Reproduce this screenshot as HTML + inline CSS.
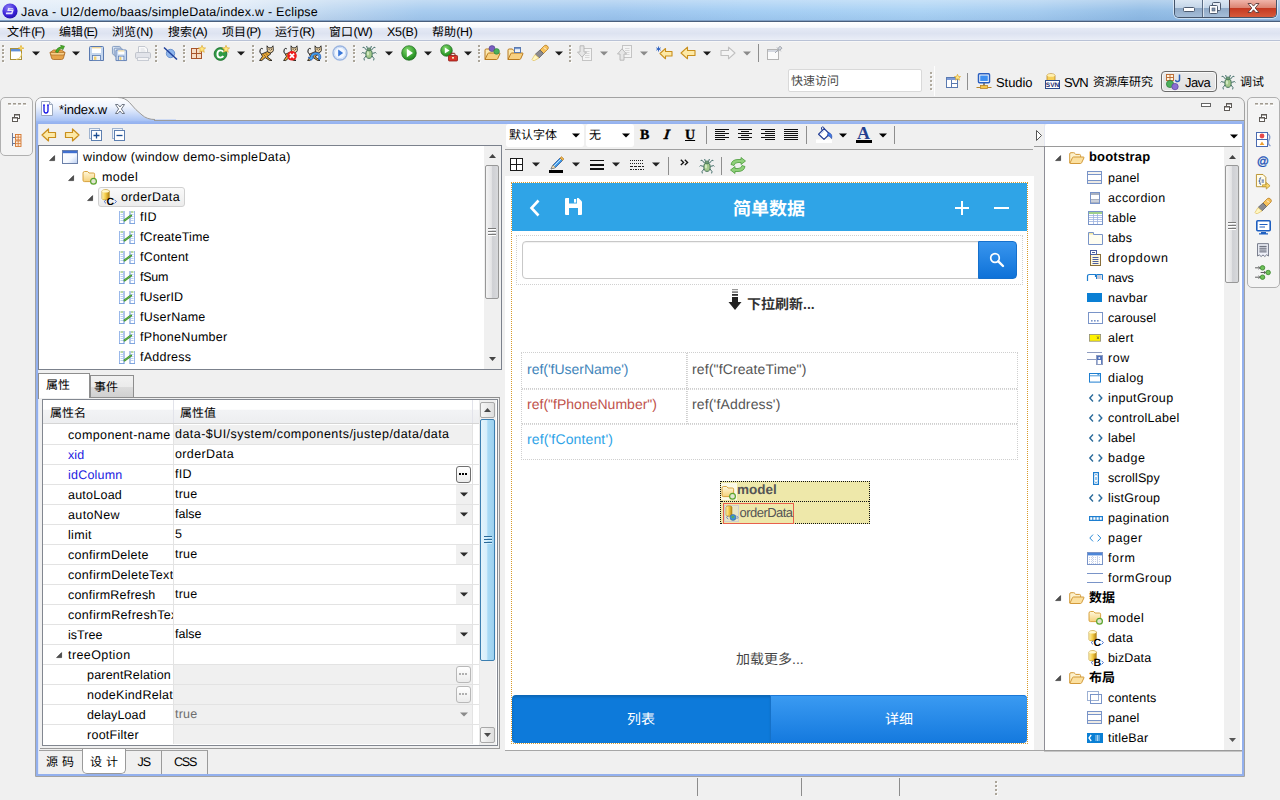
<!DOCTYPE html>
<html><head><meta charset="utf-8"><title>Java - UI2/demo/baas/simpleData/index.w - Eclipse</title>
<style>
html,body{margin:0;padding:0}
body{text-rendering:geometricPrecision;width:1280px;height:800px;position:relative;overflow:hidden;background:#f0f0f0;font-family:"Liberation Sans",sans-serif;font-size:12.5px;color:#000}
.t{position:absolute;white-space:nowrap;line-height:16px;height:16px;font-size:12.5px;letter-spacing:.32px;color:#000}
.b{font-weight:bold}
.h{position:absolute;white-space:nowrap;line-height:20px;height:20px;font-size:14px;letter-spacing:0}
</style></head>
<body>
<svg width="0" height="0" style="position:absolute;left:0;top:0"><defs><radialGradient id="gI" cx=".4" cy=".3" r=".8"><stop offset="0" stop-color="#8a7df5"/><stop offset=".6" stop-color="#3a22d8"/><stop offset="1" stop-color="#1d0f9a"/></radialGradient><linearGradient id="gT" x1="0" y1="0" x2="0" y2="1"><stop offset="0" stop-color="#ffffff"/><stop offset=".35" stop-color="#eef3fd"/><stop offset=".7" stop-color="#c3d5f8"/><stop offset="1" stop-color="#9dbaf3"/></linearGradient><linearGradient id="gW" x1="0" y1="0" x2="1" y2="1"><stop offset="0" stop-color="#fff"/><stop offset=".6" stop-color="#f4f8ff"/><stop offset="1" stop-color="#b9cdf0"/></linearGradient><linearGradient id="gF" x1="0" y1="0" x2="0" y2="1"><stop offset="0" stop-color="#fff8dc"/><stop offset="1" stop-color="#f5d17c"/></linearGradient><linearGradient id="gD" x1="0" y1="0" x2="1" y2="0"><stop offset="0" stop-color="#fff4b4"/><stop offset=".5" stop-color="#f3cb46"/><stop offset="1" stop-color="#b07f10"/></linearGradient><radialGradient id="gR" cx=".4" cy=".3" r=".8"><stop offset="0" stop-color="#7fd66a"/><stop offset=".7" stop-color="#2f9a2a"/><stop offset="1" stop-color="#1a6a1a"/></radialGradient></defs></svg>
<div style="position:absolute;left:0px;top:0px;width:1280px;height:22px;background:linear-gradient(90deg,#e0ecf8 0%,#dbe8f6 19%,#bcd6f0 26%,#a3c9ee 33%,#9cc5ee 48%,#a1ccf3 58%,#a8d1f4 72%,#a2caef 81%,#8fbbe5 89%,#97c0e8 100%)"></div>
<div style="position:absolute;left:0px;top:0px;width:1280px;height:22px;background:linear-gradient(180deg,rgba(255,255,255,.35) 0%,rgba(255,255,255,.05) 50%,rgba(60,100,160,.10) 100%)"></div>
<div style="position:absolute;left:0px;top:20px;width:1280px;height:1px;background:#7f9fc4"></div>
<div style="position:absolute;left:0px;top:21px;width:1280px;height:1px;background:#4a5f7c"></div>
<svg style="position:absolute;left:2px;top:3px;overflow:visible;" width="16" height="16" viewBox="0 0 16 16"><circle cx="8" cy="8" r="7.6" fill="url(#gI)"/><path d="M11.5 5H6.2L5.2 8h4.6l-.5 1.6H4.2l-.5 1.6h6.6l1.5-4.6H7.2l.3-.9h3.5z" fill="#e8e6ff"/></svg>
<div class="t" style="left:21px;top:4px;letter-spacing:0.234px;">Java - UI2/demo/baas/simpleData/index.w - Eclipse</div>
<div style="position:absolute;left:1174px;top:0px;width:103px;height:18px;border:1px solid #44546a;border-top:none;border-radius:0 0 5px 5px;box-sizing:border-box;overflow:hidden;box-shadow:0 0 0 1px rgba(255,255,255,.55)"><div style="position:absolute;left:0;top:0;width:55px;height:17px;background:linear-gradient(180deg,#dbe7f3 0%,#c3d5e8 45%,#8fa9c6 50%,#a5bdd8 100%)"></div><div style="position:absolute;left:27px;top:0;width:1px;height:17px;background:#5a6c84"></div><div style="position:absolute;left:28px;top:0;width:1px;height:17px;background:rgba(255,255,255,.6)"></div><div style="position:absolute;left:54px;top:0;width:1px;height:17px;background:#5a3030"></div><div style="position:absolute;left:55px;top:0;width:47px;height:17px;background:linear-gradient(180deg,#f0b5aa 0%,#dc8573 45%,#c53a22 50%,#d65a3c 100%)"></div></div>
<svg style="position:absolute;left:1174px;top:0px;overflow:visible;" width="103" height="18" viewBox="0 0 103 18"><rect x="9.5" y="7.5" width="11" height="4" rx="1" fill="#fff" stroke="#4d5b70" stroke-width="1"/><rect x="38.5" y="2.5" width="8" height="8" rx="1" fill="#e8eef6" stroke="#4d5b70"/><rect x="35.5" y="5.5" width="8" height="8" rx="1" fill="#fff" stroke="#4d5b70"/><rect x="38" y="8" width="3" height="3" fill="#7f93ad" stroke="#4d5b70" stroke-width=".6"/><path d="M74 3.5h3.2l2.3 2.6 2.3-2.6H85l-3.8 4.5L85 12.5h-3.2l-2.3-2.7-2.3 2.7H74l3.8-4.5z" fill="#fff" stroke="#5a3a3a" stroke-width=".9"/></svg>
<div style="position:absolute;left:0px;top:22px;width:1280px;height:19px;background:linear-gradient(180deg,#ffffff 0%,#f6f8fc 28%,#e4e9f5 34%,#dde3f1 60%,#e8ecf6 90%,#f3f5fa 100%)"></div>
<div style="position:absolute;left:0px;top:40px;width:1280px;height:1px;background:#b9c2d6"></div>
<div style="position:absolute;left:0px;top:41px;width:1280px;height:1px;background:#f7f7f7"></div>
<svg style="position:absolute;left:7px;top:24px;overflow:visible;" width="26" height="15.6" viewBox="0 -12 26 15.6"><text x="0" y="0" font-family="'Liberation Sans','Noto Sans CJK SC',sans-serif" font-size="12" fill="#000">文件</text></svg>
<div class="t" style="left:31.3px;top:23.5px;letter-spacing:-1.020px;">(F)</div>
<svg style="position:absolute;left:59.2px;top:24px;overflow:visible;" width="26" height="15.6" viewBox="0 -12 26 15.6"><text x="0" y="0" font-family="'Liberation Sans','Noto Sans CJK SC',sans-serif" font-size="12" fill="#000">编辑</text></svg>
<div class="t" style="left:83.5px;top:23.5px;letter-spacing:-1.171px;">(E)</div>
<svg style="position:absolute;left:112px;top:24px;overflow:visible;" width="26" height="15.6" viewBox="0 -12 26 15.6"><text x="0" y="0" font-family="'Liberation Sans','Noto Sans CJK SC',sans-serif" font-size="12" fill="#000">浏览</text></svg>
<div class="t" style="left:136.3px;top:23.5px;letter-spacing:-0.234px;">(N)</div>
<svg style="position:absolute;left:168px;top:24px;overflow:visible;" width="26" height="15.6" viewBox="0 -12 26 15.6"><text x="0" y="0" font-family="'Liberation Sans','Noto Sans CJK SC',sans-serif" font-size="12" fill="#000">搜索</text></svg>
<div class="t" style="left:192.3px;top:23.5px;letter-spacing:-0.587px;">(A)</div>
<svg style="position:absolute;left:222px;top:24px;overflow:visible;" width="26" height="15.6" viewBox="0 -12 26 15.6"><text x="0" y="0" font-family="'Liberation Sans','Noto Sans CJK SC',sans-serif" font-size="12" fill="#000">项目</text></svg>
<div class="t" style="left:246.3px;top:23.5px;letter-spacing:-0.921px;">(P)</div>
<svg style="position:absolute;left:275px;top:24px;overflow:visible;" width="26" height="15.6" viewBox="0 -12 26 15.6"><text x="0" y="0" font-family="'Liberation Sans','Noto Sans CJK SC',sans-serif" font-size="12" fill="#000">运行</text></svg>
<div class="t" style="left:299.3px;top:23.5px;letter-spacing:-0.901px;">(R)</div>
<svg style="position:absolute;left:329.2px;top:24px;overflow:visible;" width="26" height="15.6" viewBox="0 -12 26 15.6"><text x="0" y="0" font-family="'Liberation Sans','Noto Sans CJK SC',sans-serif" font-size="12" fill="#000">窗口</text></svg>
<div class="t" style="left:353.6px;top:23.5px;letter-spacing:-0.491px;">(W)</div>
<div class="t" style="left:387px;top:23.5px;letter-spacing:-0.290px;">X5(B)</div>
<svg style="position:absolute;left:432px;top:24px;overflow:visible;" width="26" height="15.6" viewBox="0 -12 26 15.6"><text x="0" y="0" font-family="'Liberation Sans','Noto Sans CJK SC',sans-serif" font-size="12" fill="#000">帮助</text></svg>
<div class="t" style="left:456.3px;top:23.5px;letter-spacing:-0.484px;">(H)</div>
<div style="position:absolute;left:788px;top:69px;width:134px;height:23px;background:#fff;border:1px solid #d9d9d9;border-radius:2px;box-sizing:border-box"></div>
<svg style="position:absolute;left:791px;top:73px;overflow:visible;" width="50" height="15.6" viewBox="0 -12 50 15.6"><text x="0" y="0" font-family="'Liberation Sans','Noto Sans CJK SC',sans-serif" font-size="12" fill="#4a4a4a">快速访问</text></svg>
<div style="position:absolute;left:930px;top:72px;width:2px;height:2px;background:#b0aa9e;box-shadow:1px 1px 0 #fbfbfb"></div>
<div style="position:absolute;left:930px;top:76px;width:2px;height:2px;background:#b0aa9e;box-shadow:1px 1px 0 #fbfbfb"></div>
<div style="position:absolute;left:930px;top:80px;width:2px;height:2px;background:#b0aa9e;box-shadow:1px 1px 0 #fbfbfb"></div>
<div style="position:absolute;left:930px;top:84px;width:2px;height:2px;background:#b0aa9e;box-shadow:1px 1px 0 #fbfbfb"></div>
<div style="position:absolute;left:930px;top:88px;width:2px;height:2px;background:#b0aa9e;box-shadow:1px 1px 0 #fbfbfb"></div>
<div style="position:absolute;left:934px;top:66px;width:1px;height:30px;background:#fdfdfd"></div>
<div style="position:absolute;left:967px;top:73px;width:1px;height:17px;background:#8e8e8e"></div>
<div class="t" style="left:996px;top:75px;letter-spacing:-0.060px;font-size:13px;">Studio</div>
<div class="t" style="left:1064px;top:75px;letter-spacing:-1.077px;font-size:13px;">SVN</div>
<svg style="position:absolute;left:1093px;top:74px;overflow:visible;" width="62" height="15.6" viewBox="0 -12 62 15.6"><text x="0" y="0" font-family="'Liberation Sans','Noto Sans CJK SC',sans-serif" font-size="12" fill="#000">资源库研究</text></svg>
<div style="position:absolute;left:1161px;top:71px;width:56px;height:21px;background:linear-gradient(180deg,#e9e9e9,#e2e2e2);border:1px solid #6a6a6a;border-radius:4px;box-sizing:border-box;box-shadow:inset 0 0 0 1px #f8f8f8"></div>
<div class="t" style="left:1185px;top:75px;letter-spacing:-0.615px;font-size:13px;">Java</div>
<svg style="position:absolute;left:1240px;top:74px;overflow:visible;" width="26" height="15.6" viewBox="0 -12 26 15.6"><text x="0" y="0" font-family="'Liberation Sans','Noto Sans CJK SC',sans-serif" font-size="12" fill="#000">调试</text></svg>
<div style="position:absolute;left:0px;top:97px;width:33px;height:59px;border:1px solid #b0b0b0;border-radius:5px;background:#f4f4f4;box-sizing:border-box"></div>
<div style="position:absolute;left:8px;top:103px;width:3px;height:1px;background:#a09a90"></div>
<div style="position:absolute;left:8px;top:104px;width:3px;height:1px;background:#c8c4bc"></div>
<div style="position:absolute;left:9px;top:105px;width:3px;height:1px;background:#fff"></div>
<div style="position:absolute;left:13px;top:103px;width:3px;height:1px;background:#a09a90"></div>
<div style="position:absolute;left:13px;top:104px;width:3px;height:1px;background:#c8c4bc"></div>
<div style="position:absolute;left:14px;top:105px;width:3px;height:1px;background:#fff"></div>
<div style="position:absolute;left:18px;top:103px;width:3px;height:1px;background:#a09a90"></div>
<div style="position:absolute;left:18px;top:104px;width:3px;height:1px;background:#c8c4bc"></div>
<div style="position:absolute;left:19px;top:105px;width:3px;height:1px;background:#fff"></div>
<div style="position:absolute;left:23px;top:103px;width:3px;height:1px;background:#a09a90"></div>
<div style="position:absolute;left:23px;top:104px;width:3px;height:1px;background:#c8c4bc"></div>
<div style="position:absolute;left:24px;top:105px;width:3px;height:1px;background:#fff"></div>
<div style="position:absolute;left:1247px;top:97px;width:33px;height:191px;border:1px solid #b0b0b0;border-radius:5px;background:#f4f4f4;box-sizing:border-box"></div>
<div style="position:absolute;left:1255px;top:103px;width:3px;height:1px;background:#a09a90"></div>
<div style="position:absolute;left:1255px;top:104px;width:3px;height:1px;background:#c8c4bc"></div>
<div style="position:absolute;left:1256px;top:105px;width:3px;height:1px;background:#fff"></div>
<div style="position:absolute;left:1260px;top:103px;width:3px;height:1px;background:#a09a90"></div>
<div style="position:absolute;left:1260px;top:104px;width:3px;height:1px;background:#c8c4bc"></div>
<div style="position:absolute;left:1261px;top:105px;width:3px;height:1px;background:#fff"></div>
<div style="position:absolute;left:1265px;top:103px;width:3px;height:1px;background:#a09a90"></div>
<div style="position:absolute;left:1265px;top:104px;width:3px;height:1px;background:#c8c4bc"></div>
<div style="position:absolute;left:1266px;top:105px;width:3px;height:1px;background:#fff"></div>
<div style="position:absolute;left:1270px;top:103px;width:3px;height:1px;background:#a09a90"></div>
<div style="position:absolute;left:1270px;top:104px;width:3px;height:1px;background:#c8c4bc"></div>
<div style="position:absolute;left:1271px;top:105px;width:3px;height:1px;background:#fff"></div>
<div style="position:absolute;left:35px;top:97px;width:1210px;height:680px;border:1px solid #a2a2a2;border-radius:7px 7px 0 0;box-sizing:border-box;background:#f0f0f0"></div>
<div style="position:absolute;left:36px;top:121px;width:2px;height:655px;background:#93b0ee"></div>
<div style="position:absolute;left:38px;top:124px;width:1px;height:650px;background:#dfe7f8"></div>
<div style="position:absolute;left:1242px;top:121px;width:2px;height:655px;background:#93b0ee"></div>
<div style="position:absolute;left:36px;top:774px;width:1208px;height:2px;background:#93b0ee"></div>
<svg style="position:absolute;left:36px;top:98px;overflow:visible;" width="140" height="25" viewBox="0 0 140 25"><path d="M0 25V7Q0 0 7 0H82Q89 0 93.5 5Q100 13 106 17.5Q111 21.5 118 21.5H140V25Z" fill="url(#gT)"/><path d="M82 -.5Q89 -.5 93.5 4.5Q100 12.5 106 17Q111 21.5 119 21.5" fill="none" stroke="#9a9a9a" stroke-width="1"/></svg>
<div style="position:absolute;left:154px;top:120px;width:1090px;height:1px;background:#9c9c9c"></div>
<div style="position:absolute;left:36px;top:121px;width:1208px;height:3px;background:linear-gradient(180deg,#9dbaf3,#93b0ee)"></div>
<svg style="position:absolute;left:41px;top:101px;overflow:visible;" width="13" height="15" viewBox="0 0 13 15"><path d="M.5 .5H8.5L11.5 3.5V14.5H.5Z" fill="#fff" stroke="#9aa7bd"/><path d="M8.5 .5V3.5H11.5" fill="#e6ecf6" stroke="#9aa7bd"/><path d="M3 4V9.5Q3 12 5 12T7 9.5V4" fill="none" stroke="#1414e6" stroke-width="1.3"/><path d="M2 4H4M6 4H8" stroke="#1414e6"/></svg>
<div class="t" style="left:59px;top:102px;letter-spacing:-0.142px;font-size:13px;">*index.w</div>
<svg style="position:absolute;left:114px;top:103px;overflow:visible;" width="12" height="12" viewBox="0 0 12 12"><path d="M1.5 1.5H4L6 4 8 1.5H10.5L7.4 6 10.5 10.5H8L6 8 4 10.5H1.5L4.6 6Z" fill="#fff" stroke="#6f7785" stroke-width="1"/></svg>
<svg style="position:absolute;left:1201px;top:103px;overflow:visible;" width="10" height="4" viewBox="0 0 10 4"><rect x=".5" y=".5" width="9" height="3" fill="#fff" stroke="#666"/></svg>
<div style="position:absolute;left:697px;top:778px;width:1px;height:18px;background:#8c8c8c"></div>
<div style="position:absolute;left:801px;top:778px;width:1px;height:18px;background:#8c8c8c"></div>
<div style="position:absolute;left:899px;top:778px;width:1px;height:18px;background:#8c8c8c"></div>
<div style="position:absolute;left:995px;top:781px;width:2px;height:2px;background:#aaa498;box-shadow:1px 1px 0 #fbfbfb"></div>
<div style="position:absolute;left:995px;top:785px;width:2px;height:2px;background:#aaa498;box-shadow:1px 1px 0 #fbfbfb"></div>
<div style="position:absolute;left:995px;top:789px;width:2px;height:2px;background:#aaa498;box-shadow:1px 1px 0 #fbfbfb"></div>
<div style="position:absolute;left:995px;top:793px;width:2px;height:2px;background:#aaa498;box-shadow:1px 1px 0 #fbfbfb"></div>
<svg style="position:absolute;left:41px;top:128px;overflow:visible;" width="16" height="14" viewBox="0 0 16 14"><path d="M1 7L7.5 1V4.5H14.5V9.5H7.5V13Z" fill="#fde9a6" stroke="#c98f1d" stroke-width="1.2" stroke-linejoin="round"/></svg>
<svg style="position:absolute;left:64px;top:128px;overflow:visible;" width="16" height="14" viewBox="0 0 16 14"><path d="M1 7L7.5 1V4.5H14.5V9.5H7.5V13Z" transform="translate(16,0) scale(-1,1)" fill="#fde9a6" stroke="#c98f1d" stroke-width="1.2" stroke-linejoin="round"/></svg>
<svg style="position:absolute;left:89px;top:128px;overflow:visible;" width="14" height="14" viewBox="0 0 14 14"><rect x=".5" y=".5" width="10" height="10" fill="#eef3fa" stroke="#9fb3cf"/><rect x="2.5" y="2.5" width="10" height="10" fill="#fff" stroke="#5d7fb0"/><path d="M4.5 7.5H10.5M7.5 4.5V10.5" stroke="#1c4e93" stroke-width="1.3"/></svg>
<svg style="position:absolute;left:112px;top:128px;overflow:visible;" width="14" height="14" viewBox="0 0 14 14"><rect x=".5" y=".5" width="10" height="10" fill="#eef3fa" stroke="#9fb3cf"/><rect x="2.5" y="2.5" width="10" height="10" fill="#fff" stroke="#5d7fb0"/><path d="M4.5 7.5H10.5" stroke="#1c4e93" stroke-width="1.3"/></svg>
<div style="position:absolute;left:38px;top:145px;width:464px;height:225px;background:#fff;border:1px solid #7b818c;box-sizing:border-box"></div>
<div style="position:absolute;left:484px;top:146px;width:17px;height:223px;background:#f0f0f0"></div>
<svg style="position:absolute;left:489px;top:154px;overflow:visible;" width="7" height="4" viewBox="0 0 7 4"><path d="M0 4L3.5 0 7 4Z" fill="#444"/></svg>
<svg style="position:absolute;left:489px;top:357px;overflow:visible;" width="7" height="4" viewBox="0 0 7 4"><path d="M0 0H7L3.5 4Z" fill="#444"/></svg>
<div style="position:absolute;left:485px;top:165px;width:14px;height:134px;border:1px solid #979797;border-radius:2px;box-sizing:border-box;background:linear-gradient(90deg,#f4f4f4 0%,#e4e4e6 45%,#cfd0d4 55%,#d8d9dc 100%)"></div>
<div style="position:absolute;left:488px;top:228px;width:8px;height:1px;background:#7a7a7a"></div>
<div style="position:absolute;left:488px;top:229px;width:8px;height:1px;background:#fff"></div>
<div style="position:absolute;left:488px;top:231px;width:8px;height:1px;background:#7a7a7a"></div>
<div style="position:absolute;left:488px;top:232px;width:8px;height:1px;background:#fff"></div>
<div style="position:absolute;left:488px;top:234px;width:8px;height:1px;background:#7a7a7a"></div>
<div style="position:absolute;left:488px;top:235px;width:8px;height:1px;background:#fff"></div>
<svg style="position:absolute;left:49px;top:155px;overflow:visible;" width="6" height="6" viewBox="0 0 6 6"><path d="M5.6 .6V5.6H.6Z" fill="#505050" stroke="#262626" stroke-width=".6" stroke-linejoin="round"/></svg>
<svg style="position:absolute;left:62px;top:150px;overflow:visible;" width="16" height="14" viewBox="0 0 16 14"><rect x=".5" y=".5" width="15" height="13" fill="url(#gW)" stroke="#6a7fa8"/><rect x="1" y="1" width="14" height="2.2" fill="#3f6fd0"/></svg>
<div class="t" style="left:83px;top:149px;letter-spacing:0.360px;">window (window demo-simpleData)</div>
<svg style="position:absolute;left:68px;top:175px;overflow:visible;" width="6" height="6" viewBox="0 0 6 6"><path d="M5.6 .6V5.6H.6Z" fill="#505050" stroke="#262626" stroke-width=".6" stroke-linejoin="round"/></svg>
<svg style="position:absolute;left:82px;top:170px;overflow:visible;" width="16" height="15" viewBox="0 0 16 15"><path d="M1 3.2Q1 1.5 2.6 1.5H5.6L7 3H11.4Q12.6 3 12.6 4.2V10.4Q12.6 11.6 11.4 11.6H2.4Q1 11.6 1 10.2Z" fill="url(#gF)" stroke="#d49a2f" stroke-width=".9"/><circle cx="11.5" cy="11.2" r="2.9" fill="#e1e6d2" stroke="#5aa52c" stroke-width="1.2"/></svg>
<div class="t" style="left:102px;top:169px;letter-spacing:0.431px;">model</div>
<svg style="position:absolute;left:87px;top:195px;overflow:visible;" width="6" height="6" viewBox="0 0 6 6"><path d="M5.6 .6V5.6H.6Z" fill="#505050" stroke="#262626" stroke-width=".6" stroke-linejoin="round"/></svg>
<div style="position:absolute;left:98px;top:187px;width:87px;height:20px;border:1px solid #d0d0d0;border-radius:3px;box-sizing:border-box;background:linear-gradient(180deg,#fafafa,#ececec)"></div>
<svg style="position:absolute;left:101px;top:189px;overflow:visible;" width="17" height="17" viewBox="0 0 17 17"><path d="M.8 2.2Q.8 .6 4.6 .6T8.4 2.2V9.4Q8.4 11 4.6 11T.8 9.4Z" fill="url(#gD)" stroke="#b48a1c" stroke-width=".5"/><ellipse cx="4.6" cy="2.2" rx="3.6" ry="1.3" fill="#fff7cc"/><path d="M5 10.8L3.2 12.6 5 14.4M13.6 10.8L15.4 12.6 13.6 14.4" fill="none" stroke="#3a63c8" stroke-width=".9"/><text x="9.4" y="16.2" font-family="Liberation Sans,sans-serif" font-weight="bold" font-size="10.5" text-anchor="middle" fill="#000" stroke="#fff" stroke-width=".0">C</text></svg>
<div class="t" style="left:121px;top:189px;letter-spacing:0.380px;">orderData</div>
<svg style="position:absolute;left:119px;top:210px;overflow:visible;" width="17" height="14" viewBox="0 0 17 14"><rect x="0.5" y="1" width="4.5" height="12.5" fill="#fff"/><path d="M0.5 1V13.5" stroke="#8fb0e8" stroke-width=".9"/><path d="M5 1V13.5" stroke="#4f7fd0" stroke-width=".9"/><path d="M0 13.5H5.5" stroke="#5f8fd6" stroke-width=".8"/><path d="M1.5 2H4" stroke="#6ab04a" stroke-width="1"/><path d="M1.5 4.5H4M1.5 6.5H4M1.5 8.5H4M1.5 10.5H4" stroke="#a9c4ee" stroke-width=".8"/><rect x="11.0" y="1" width="4.5" height="12.5" fill="#fff"/><path d="M11.0 1V13.5" stroke="#4f7fd0" stroke-width=".9"/><path d="M15.5 1V13.5" stroke="#8fb0e8" stroke-width=".9"/><path d="M10.5 13.5H16.0" stroke="#5f8fd6" stroke-width=".8"/><path d="M12.0 2H14.5" stroke="#6ab04a" stroke-width="1"/><path d="M12.0 4.5H14.5M12.0 6.5H14.5M12.0 8.5H14.5M12.0 10.5H14.5" stroke="#a9c4ee" stroke-width=".8"/><path d="M5.6 10.4L12 5.6" stroke="#3f8f30" stroke-width="2.2" stroke-linecap="round"/><path d="M5.8 10.2L11.8 5.7" stroke="#6cc24a" stroke-width=".9" stroke-linecap="round"/></svg>
<div class="t" style="left:140px;top:209px;letter-spacing:0.259px;">fID</div>
<svg style="position:absolute;left:119px;top:230px;overflow:visible;" width="17" height="14" viewBox="0 0 17 14"><rect x="0.5" y="1" width="4.5" height="12.5" fill="#fff"/><path d="M0.5 1V13.5" stroke="#8fb0e8" stroke-width=".9"/><path d="M5 1V13.5" stroke="#4f7fd0" stroke-width=".9"/><path d="M0 13.5H5.5" stroke="#5f8fd6" stroke-width=".8"/><path d="M1.5 2H4" stroke="#6ab04a" stroke-width="1"/><path d="M1.5 4.5H4M1.5 6.5H4M1.5 8.5H4M1.5 10.5H4" stroke="#a9c4ee" stroke-width=".8"/><rect x="11.0" y="1" width="4.5" height="12.5" fill="#fff"/><path d="M11.0 1V13.5" stroke="#4f7fd0" stroke-width=".9"/><path d="M15.5 1V13.5" stroke="#8fb0e8" stroke-width=".9"/><path d="M10.5 13.5H16.0" stroke="#5f8fd6" stroke-width=".8"/><path d="M12.0 2H14.5" stroke="#6ab04a" stroke-width="1"/><path d="M12.0 4.5H14.5M12.0 6.5H14.5M12.0 8.5H14.5M12.0 10.5H14.5" stroke="#a9c4ee" stroke-width=".8"/><path d="M5.6 10.4L12 5.6" stroke="#3f8f30" stroke-width="2.2" stroke-linecap="round"/><path d="M5.8 10.2L11.8 5.7" stroke="#6cc24a" stroke-width=".9" stroke-linecap="round"/></svg>
<div class="t" style="left:140px;top:229px;letter-spacing:0.109px;">fCreateTime</div>
<svg style="position:absolute;left:119px;top:250px;overflow:visible;" width="17" height="14" viewBox="0 0 17 14"><rect x="0.5" y="1" width="4.5" height="12.5" fill="#fff"/><path d="M0.5 1V13.5" stroke="#8fb0e8" stroke-width=".9"/><path d="M5 1V13.5" stroke="#4f7fd0" stroke-width=".9"/><path d="M0 13.5H5.5" stroke="#5f8fd6" stroke-width=".8"/><path d="M1.5 2H4" stroke="#6ab04a" stroke-width="1"/><path d="M1.5 4.5H4M1.5 6.5H4M1.5 8.5H4M1.5 10.5H4" stroke="#a9c4ee" stroke-width=".8"/><rect x="11.0" y="1" width="4.5" height="12.5" fill="#fff"/><path d="M11.0 1V13.5" stroke="#4f7fd0" stroke-width=".9"/><path d="M15.5 1V13.5" stroke="#8fb0e8" stroke-width=".9"/><path d="M10.5 13.5H16.0" stroke="#5f8fd6" stroke-width=".8"/><path d="M12.0 2H14.5" stroke="#6ab04a" stroke-width="1"/><path d="M12.0 4.5H14.5M12.0 6.5H14.5M12.0 8.5H14.5M12.0 10.5H14.5" stroke="#a9c4ee" stroke-width=".8"/><path d="M5.6 10.4L12 5.6" stroke="#3f8f30" stroke-width="2.2" stroke-linecap="round"/><path d="M5.8 10.2L11.8 5.7" stroke="#6cc24a" stroke-width=".9" stroke-linecap="round"/></svg>
<div class="t" style="left:140px;top:249px;letter-spacing:0.188px;">fContent</div>
<svg style="position:absolute;left:119px;top:270px;overflow:visible;" width="17" height="14" viewBox="0 0 17 14"><rect x="0.5" y="1" width="4.5" height="12.5" fill="#fff"/><path d="M0.5 1V13.5" stroke="#8fb0e8" stroke-width=".9"/><path d="M5 1V13.5" stroke="#4f7fd0" stroke-width=".9"/><path d="M0 13.5H5.5" stroke="#5f8fd6" stroke-width=".8"/><path d="M1.5 2H4" stroke="#6ab04a" stroke-width="1"/><path d="M1.5 4.5H4M1.5 6.5H4M1.5 8.5H4M1.5 10.5H4" stroke="#a9c4ee" stroke-width=".8"/><rect x="11.0" y="1" width="4.5" height="12.5" fill="#fff"/><path d="M11.0 1V13.5" stroke="#4f7fd0" stroke-width=".9"/><path d="M15.5 1V13.5" stroke="#8fb0e8" stroke-width=".9"/><path d="M10.5 13.5H16.0" stroke="#5f8fd6" stroke-width=".8"/><path d="M12.0 2H14.5" stroke="#6ab04a" stroke-width="1"/><path d="M12.0 4.5H14.5M12.0 6.5H14.5M12.0 8.5H14.5M12.0 10.5H14.5" stroke="#a9c4ee" stroke-width=".8"/><path d="M5.6 10.4L12 5.6" stroke="#3f8f30" stroke-width="2.2" stroke-linecap="round"/><path d="M5.8 10.2L11.8 5.7" stroke="#6cc24a" stroke-width=".9" stroke-linecap="round"/></svg>
<div class="t" style="left:140px;top:269px;letter-spacing:-0.231px;">fSum</div>
<svg style="position:absolute;left:119px;top:290px;overflow:visible;" width="17" height="14" viewBox="0 0 17 14"><rect x="0.5" y="1" width="4.5" height="12.5" fill="#fff"/><path d="M0.5 1V13.5" stroke="#8fb0e8" stroke-width=".9"/><path d="M5 1V13.5" stroke="#4f7fd0" stroke-width=".9"/><path d="M0 13.5H5.5" stroke="#5f8fd6" stroke-width=".8"/><path d="M1.5 2H4" stroke="#6ab04a" stroke-width="1"/><path d="M1.5 4.5H4M1.5 6.5H4M1.5 8.5H4M1.5 10.5H4" stroke="#a9c4ee" stroke-width=".8"/><rect x="11.0" y="1" width="4.5" height="12.5" fill="#fff"/><path d="M11.0 1V13.5" stroke="#4f7fd0" stroke-width=".9"/><path d="M15.5 1V13.5" stroke="#8fb0e8" stroke-width=".9"/><path d="M10.5 13.5H16.0" stroke="#5f8fd6" stroke-width=".8"/><path d="M12.0 2H14.5" stroke="#6ab04a" stroke-width="1"/><path d="M12.0 4.5H14.5M12.0 6.5H14.5M12.0 8.5H14.5M12.0 10.5H14.5" stroke="#a9c4ee" stroke-width=".8"/><path d="M5.6 10.4L12 5.6" stroke="#3f8f30" stroke-width="2.2" stroke-linecap="round"/><path d="M5.8 10.2L11.8 5.7" stroke="#6cc24a" stroke-width=".9" stroke-linecap="round"/></svg>
<div class="t" style="left:140px;top:289px;letter-spacing:0.127px;">fUserID</div>
<svg style="position:absolute;left:119px;top:310px;overflow:visible;" width="17" height="14" viewBox="0 0 17 14"><rect x="0.5" y="1" width="4.5" height="12.5" fill="#fff"/><path d="M0.5 1V13.5" stroke="#8fb0e8" stroke-width=".9"/><path d="M5 1V13.5" stroke="#4f7fd0" stroke-width=".9"/><path d="M0 13.5H5.5" stroke="#5f8fd6" stroke-width=".8"/><path d="M1.5 2H4" stroke="#6ab04a" stroke-width="1"/><path d="M1.5 4.5H4M1.5 6.5H4M1.5 8.5H4M1.5 10.5H4" stroke="#a9c4ee" stroke-width=".8"/><rect x="11.0" y="1" width="4.5" height="12.5" fill="#fff"/><path d="M11.0 1V13.5" stroke="#4f7fd0" stroke-width=".9"/><path d="M15.5 1V13.5" stroke="#8fb0e8" stroke-width=".9"/><path d="M10.5 13.5H16.0" stroke="#5f8fd6" stroke-width=".8"/><path d="M12.0 2H14.5" stroke="#6ab04a" stroke-width="1"/><path d="M12.0 4.5H14.5M12.0 6.5H14.5M12.0 8.5H14.5M12.0 10.5H14.5" stroke="#a9c4ee" stroke-width=".8"/><path d="M5.6 10.4L12 5.6" stroke="#3f8f30" stroke-width="2.2" stroke-linecap="round"/><path d="M5.8 10.2L11.8 5.7" stroke="#6cc24a" stroke-width=".9" stroke-linecap="round"/></svg>
<div class="t" style="left:140px;top:309px;letter-spacing:0.255px;">fUserName</div>
<svg style="position:absolute;left:119px;top:330px;overflow:visible;" width="17" height="14" viewBox="0 0 17 14"><rect x="0.5" y="1" width="4.5" height="12.5" fill="#fff"/><path d="M0.5 1V13.5" stroke="#8fb0e8" stroke-width=".9"/><path d="M5 1V13.5" stroke="#4f7fd0" stroke-width=".9"/><path d="M0 13.5H5.5" stroke="#5f8fd6" stroke-width=".8"/><path d="M1.5 2H4" stroke="#6ab04a" stroke-width="1"/><path d="M1.5 4.5H4M1.5 6.5H4M1.5 8.5H4M1.5 10.5H4" stroke="#a9c4ee" stroke-width=".8"/><rect x="11.0" y="1" width="4.5" height="12.5" fill="#fff"/><path d="M11.0 1V13.5" stroke="#4f7fd0" stroke-width=".9"/><path d="M15.5 1V13.5" stroke="#8fb0e8" stroke-width=".9"/><path d="M10.5 13.5H16.0" stroke="#5f8fd6" stroke-width=".8"/><path d="M12.0 2H14.5" stroke="#6ab04a" stroke-width="1"/><path d="M12.0 4.5H14.5M12.0 6.5H14.5M12.0 8.5H14.5M12.0 10.5H14.5" stroke="#a9c4ee" stroke-width=".8"/><path d="M5.6 10.4L12 5.6" stroke="#3f8f30" stroke-width="2.2" stroke-linecap="round"/><path d="M5.8 10.2L11.8 5.7" stroke="#6cc24a" stroke-width=".9" stroke-linecap="round"/></svg>
<div class="t" style="left:140px;top:329px;letter-spacing:0.286px;">fPhoneNumber</div>
<svg style="position:absolute;left:119px;top:350px;overflow:visible;" width="17" height="14" viewBox="0 0 17 14"><rect x="0.5" y="1" width="4.5" height="12.5" fill="#fff"/><path d="M0.5 1V13.5" stroke="#8fb0e8" stroke-width=".9"/><path d="M5 1V13.5" stroke="#4f7fd0" stroke-width=".9"/><path d="M0 13.5H5.5" stroke="#5f8fd6" stroke-width=".8"/><path d="M1.5 2H4" stroke="#6ab04a" stroke-width="1"/><path d="M1.5 4.5H4M1.5 6.5H4M1.5 8.5H4M1.5 10.5H4" stroke="#a9c4ee" stroke-width=".8"/><rect x="11.0" y="1" width="4.5" height="12.5" fill="#fff"/><path d="M11.0 1V13.5" stroke="#4f7fd0" stroke-width=".9"/><path d="M15.5 1V13.5" stroke="#8fb0e8" stroke-width=".9"/><path d="M10.5 13.5H16.0" stroke="#5f8fd6" stroke-width=".8"/><path d="M12.0 2H14.5" stroke="#6ab04a" stroke-width="1"/><path d="M12.0 4.5H14.5M12.0 6.5H14.5M12.0 8.5H14.5M12.0 10.5H14.5" stroke="#a9c4ee" stroke-width=".8"/><path d="M5.6 10.4L12 5.6" stroke="#3f8f30" stroke-width="2.2" stroke-linecap="round"/><path d="M5.8 10.2L11.8 5.7" stroke="#6cc24a" stroke-width=".9" stroke-linecap="round"/></svg>
<div class="t" style="left:140px;top:349px;letter-spacing:0.240px;">fAddress</div>
<div style="position:absolute;left:90px;top:375px;width:44px;height:23px;border:1px solid #8e8e8e;border-bottom:none;box-sizing:border-box;background:linear-gradient(180deg,#f2f2f2 0%,#ebebeb 50%,#dcdcdc 52%,#cfcfcf 100%)"></div>
<div style="position:absolute;left:38px;top:373px;width:52px;height:26px;border:1px solid #8e8e8e;border-bottom:none;box-sizing:border-box;background:#fff"></div>
<svg style="position:absolute;left:46px;top:377px;overflow:visible;" width="26" height="15.6" viewBox="0 -12 26 15.6"><text x="0" y="0" font-family="'Liberation Sans','Noto Sans CJK SC',sans-serif" font-size="12" fill="#000">属性</text></svg>
<svg style="position:absolute;left:94px;top:379px;overflow:visible;" width="26" height="15.6" viewBox="0 -12 26 15.6"><text x="0" y="0" font-family="'Liberation Sans','Noto Sans CJK SC',sans-serif" font-size="12" fill="#000">事件</text></svg>
<div style="position:absolute;left:39px;top:397px;width:461px;height:352px;border:1px solid #8e8e8e;box-sizing:border-box;background:#f0f0f0;border-left:none;border-right:none;border-bottom:none"></div>
<div style="position:absolute;left:39px;top:397px;width:50px;height:1px;background:#fff"></div>
<div style="position:absolute;left:42px;top:399px;width:456px;height:347px;border:1px solid #828790;box-sizing:border-box;background:#fff"></div>
<div style="position:absolute;left:497px;top:399px;width:1px;height:347px;background:#828790"></div>
<div style="position:absolute;left:499px;top:398px;width:1px;height:351px;background:#9a9a9a"></div>
<div style="position:absolute;left:40px;top:748px;width:460px;height:1px;background:#9a9a9a"></div>
<div style="position:absolute;left:43px;top:400px;width:436px;height:24px;background:linear-gradient(180deg,#ffffff 0%,#ffffff 40%,#f2f3f5 45%,#edeef0 100%);border-bottom:1px solid #d5d5d5;box-sizing:border-box"></div>
<div style="position:absolute;left:173px;top:400px;width:1px;height:23px;background:#e2e3ea"></div>
<div style="position:absolute;left:472px;top:400px;width:1px;height:23px;background:#e2e3ea"></div>
<svg style="position:absolute;left:50px;top:405px;overflow:visible;" width="38" height="15.6" viewBox="0 -12 38 15.6"><text x="0" y="0" font-family="'Liberation Sans','Noto Sans CJK SC',sans-serif" font-size="12" fill="#000">属性名</text></svg>
<svg style="position:absolute;left:180px;top:405px;overflow:visible;" width="38" height="15.6" viewBox="0 -12 38 15.6"><text x="0" y="0" font-family="'Liberation Sans','Noto Sans CJK SC',sans-serif" font-size="12" fill="#000">属性值</text></svg>
<div style="position:absolute;left:174px;top:425px;width:298px;height:19px;background:#f0f0f0"></div>
<div style="position:absolute;left:43px;top:444px;width:436px;height:1px;background:#e3e3e3"></div>
<div style="position:absolute;left:68px;top:424px;width:105px;height:20px;overflow:hidden"><div class="t" style="left:0;top:3px;color:#000;letter-spacing:0.374px;">component-name</div></div>
<div class="t" style="left:175px;top:426px;letter-spacing:0.454px;color:#000">data-$UI/system/components/justep/data/data</div>
<div style="position:absolute;left:43px;top:464px;width:436px;height:1px;background:#e3e3e3"></div>
<div style="position:absolute;left:68px;top:444px;width:105px;height:20px;overflow:hidden"><div class="t" style="left:0;top:3px;color:#1a1ae0;letter-spacing:0.090px;">xid</div></div>
<div class="t" style="left:175px;top:446px;letter-spacing:0.380px;color:#000">orderData</div>
<div style="position:absolute;left:43px;top:484px;width:436px;height:1px;background:#e3e3e3"></div>
<div style="position:absolute;left:68px;top:464px;width:105px;height:20px;overflow:hidden"><div class="t" style="left:0;top:3px;color:#1a1ae0;letter-spacing:0.213px;">idColumn</div></div>
<div class="t" style="left:175px;top:466px;letter-spacing:0.259px;color:#000">fID</div>
<div style="position:absolute;left:456px;top:466px;width:15px;height:17px;border:1px solid #707070;border-radius:3px;box-sizing:border-box;background:linear-gradient(180deg,#fff,#ececec)"></div>
<div style="position:absolute;left:459px;top:473px;width:2px;height:2px;background:#000"></div>
<div style="position:absolute;left:462px;top:473px;width:2px;height:2px;background:#000"></div>
<div style="position:absolute;left:465px;top:473px;width:2px;height:2px;background:#000"></div>
<div style="position:absolute;left:43px;top:504px;width:436px;height:1px;background:#e3e3e3"></div>
<div style="position:absolute;left:68px;top:484px;width:105px;height:20px;overflow:hidden"><div class="t" style="left:0;top:3px;color:#000;letter-spacing:0.234px;">autoLoad</div></div>
<div class="t" style="left:175px;top:486px;letter-spacing:0.241px;color:#000">true</div>
<div style="position:absolute;left:456px;top:485px;width:16px;height:19px;background:#f0f0f0"></div>
<svg style="position:absolute;left:460px;top:492px;overflow:visible;" width="8" height="5" viewBox="0 0 8 5"><path d="M0 .5H8L4 4.5Z" fill="#2a2a2a"/></svg>
<div style="position:absolute;left:43px;top:524px;width:436px;height:1px;background:#e3e3e3"></div>
<div style="position:absolute;left:68px;top:504px;width:105px;height:20px;overflow:hidden"><div class="t" style="left:0;top:3px;color:#000;letter-spacing:0.381px;">autoNew</div></div>
<div class="t" style="left:175px;top:506px;letter-spacing:0.020px;color:#000">false</div>
<div style="position:absolute;left:456px;top:505px;width:16px;height:19px;background:#f0f0f0"></div>
<svg style="position:absolute;left:460px;top:512px;overflow:visible;" width="8" height="5" viewBox="0 0 8 5"><path d="M0 .5H8L4 4.5Z" fill="#2a2a2a"/></svg>
<div style="position:absolute;left:43px;top:544px;width:436px;height:1px;background:#e3e3e3"></div>
<div style="position:absolute;left:68px;top:524px;width:105px;height:20px;overflow:hidden"><div class="t" style="left:0;top:3px;color:#000;letter-spacing:0.307px;">limit</div></div>
<div class="t" style="left:175px;top:526px;letter-spacing:-0.201px;color:#000">5</div>
<div style="position:absolute;left:43px;top:564px;width:436px;height:1px;background:#e3e3e3"></div>
<div style="position:absolute;left:68px;top:544px;width:105px;height:20px;overflow:hidden"><div class="t" style="left:0;top:3px;color:#000;letter-spacing:0.280px;">confirmDelete</div></div>
<div class="t" style="left:175px;top:546px;letter-spacing:0.241px;color:#000">true</div>
<div style="position:absolute;left:456px;top:545px;width:16px;height:19px;background:#f0f0f0"></div>
<svg style="position:absolute;left:460px;top:552px;overflow:visible;" width="8" height="5" viewBox="0 0 8 5"><path d="M0 .5H8L4 4.5Z" fill="#2a2a2a"/></svg>
<div style="position:absolute;left:43px;top:584px;width:436px;height:1px;background:#e3e3e3"></div>
<div style="position:absolute;left:68px;top:564px;width:105px;height:20px;overflow:hidden"><div class="t" style="left:0;top:3px;color:#000;">confirmDeleteText</div></div>
<div style="position:absolute;left:43px;top:604px;width:436px;height:1px;background:#e3e3e3"></div>
<div style="position:absolute;left:68px;top:584px;width:105px;height:20px;overflow:hidden"><div class="t" style="left:0;top:3px;color:#000;letter-spacing:0.197px;">confirmRefresh</div></div>
<div class="t" style="left:175px;top:586px;letter-spacing:0.241px;color:#000">true</div>
<div style="position:absolute;left:456px;top:585px;width:16px;height:19px;background:#f0f0f0"></div>
<svg style="position:absolute;left:460px;top:592px;overflow:visible;" width="8" height="5" viewBox="0 0 8 5"><path d="M0 .5H8L4 4.5Z" fill="#2a2a2a"/></svg>
<div style="position:absolute;left:43px;top:624px;width:436px;height:1px;background:#e3e3e3"></div>
<div style="position:absolute;left:68px;top:604px;width:105px;height:20px;overflow:hidden"><div class="t" style="left:0;top:3px;color:#000;">confirmRefreshText</div></div>
<div style="position:absolute;left:43px;top:644px;width:436px;height:1px;background:#e3e3e3"></div>
<div style="position:absolute;left:68px;top:624px;width:105px;height:20px;overflow:hidden"><div class="t" style="left:0;top:3px;color:#000;letter-spacing:0.039px;">isTree</div></div>
<div class="t" style="left:175px;top:626px;letter-spacing:0.020px;color:#000">false</div>
<div style="position:absolute;left:456px;top:625px;width:16px;height:19px;background:#f0f0f0"></div>
<svg style="position:absolute;left:460px;top:632px;overflow:visible;" width="8" height="5" viewBox="0 0 8 5"><path d="M0 .5H8L4 4.5Z" fill="#2a2a2a"/></svg>
<div style="position:absolute;left:43px;top:664px;width:436px;height:1px;background:#e3e3e3"></div>
<div style="position:absolute;left:68px;top:644px;width:105px;height:20px;overflow:hidden"><div class="t" style="left:0;top:3px;color:#000;letter-spacing:0.414px;">treeOption</div></div>
<svg style="position:absolute;left:56px;top:652px;overflow:visible;" width="6" height="6" viewBox="0 0 6 6"><path d="M5.6 .6V5.6H.6Z" fill="#505050" stroke="#262626" stroke-width=".6" stroke-linejoin="round"/></svg>
<div style="position:absolute;left:174px;top:665px;width:298px;height:19px;background:#f0f0f0"></div>
<div style="position:absolute;left:43px;top:684px;width:436px;height:1px;background:#e3e3e3"></div>
<div style="position:absolute;left:87px;top:664px;width:86px;height:20px;overflow:hidden"><div class="t" style="left:0;top:3px;color:#000;letter-spacing:0.193px;">parentRelation</div></div>
<div style="position:absolute;left:456px;top:666px;width:15px;height:17px;border:1px solid #b8b8b8;border-radius:3px;box-sizing:border-box;background:linear-gradient(180deg,#fff,#ececec)"></div>
<div style="position:absolute;left:459px;top:673px;width:2px;height:2px;background:#b0b0b0"></div>
<div style="position:absolute;left:462px;top:673px;width:2px;height:2px;background:#b0b0b0"></div>
<div style="position:absolute;left:465px;top:673px;width:2px;height:2px;background:#b0b0b0"></div>
<div style="position:absolute;left:174px;top:685px;width:298px;height:19px;background:#f0f0f0"></div>
<div style="position:absolute;left:43px;top:704px;width:436px;height:1px;background:#e3e3e3"></div>
<div style="position:absolute;left:87px;top:684px;width:86px;height:20px;overflow:hidden"><div class="t" style="left:0;top:3px;color:#000;">nodeKindRelation</div></div>
<div style="position:absolute;left:456px;top:686px;width:15px;height:17px;border:1px solid #b8b8b8;border-radius:3px;box-sizing:border-box;background:linear-gradient(180deg,#fff,#ececec)"></div>
<div style="position:absolute;left:459px;top:693px;width:2px;height:2px;background:#b0b0b0"></div>
<div style="position:absolute;left:462px;top:693px;width:2px;height:2px;background:#b0b0b0"></div>
<div style="position:absolute;left:465px;top:693px;width:2px;height:2px;background:#b0b0b0"></div>
<div style="position:absolute;left:174px;top:705px;width:298px;height:19px;background:#f0f0f0"></div>
<div style="position:absolute;left:43px;top:724px;width:436px;height:1px;background:#e3e3e3"></div>
<div style="position:absolute;left:87px;top:704px;width:86px;height:20px;overflow:hidden"><div class="t" style="left:0;top:3px;color:#000;letter-spacing:0.118px;">delayLoad</div></div>
<div class="t" style="left:175px;top:706px;letter-spacing:0.241px;color:#6d6d6d">true</div>
<div style="position:absolute;left:456px;top:705px;width:16px;height:19px;background:#f0f0f0"></div>
<svg style="position:absolute;left:460px;top:712px;overflow:visible;" width="8" height="5" viewBox="0 0 8 5"><path d="M0 .5H8L4 4.5Z" fill="#8a8a8a"/></svg>
<div style="position:absolute;left:174px;top:725px;width:298px;height:19px;background:#f0f0f0"></div>
<div style="position:absolute;left:43px;top:744px;width:436px;height:1px;background:#fff"></div>
<div style="position:absolute;left:87px;top:724px;width:86px;height:20px;overflow:hidden"><div class="t" style="left:0;top:3px;color:#000;letter-spacing:0.269px;">rootFilter</div></div>
<div style="position:absolute;left:173px;top:424px;width:1px;height:320px;background:#e3e3e3"></div>
<div style="position:absolute;left:472px;top:424px;width:1px;height:320px;background:#e3e3e3"></div>
<div style="position:absolute;left:479px;top:400px;width:1px;height:345px;background:#e9e9e9"></div>
<div style="position:absolute;left:480px;top:400px;width:16px;height:345px;background:#f0f0f0"></div>
<div style="position:absolute;left:480px;top:402px;width:15px;height:16px;border:1px solid #a8a8a8;border-radius:2px;box-sizing:border-box;background:linear-gradient(90deg,#f7f7f7,#dedede)"></div>
<svg style="position:absolute;left:484px;top:408px;overflow:visible;" width="7" height="4" viewBox="0 0 7 4"><path d="M0 4L3.5 0 7 4Z" fill="#4a4a4a"/></svg>
<div style="position:absolute;left:480px;top:727px;width:15px;height:16px;border:1px solid #a8a8a8;border-radius:2px;box-sizing:border-box;background:linear-gradient(90deg,#f7f7f7,#dedede)"></div>
<svg style="position:absolute;left:484px;top:733px;overflow:visible;" width="7" height="4" viewBox="0 0 7 4"><path d="M0 0H7L3.5 4Z" fill="#4a4a4a"/></svg>
<div style="position:absolute;left:480px;top:419px;width:15px;height:242px;border:1px solid #3c7fb1;border-radius:2px;box-sizing:border-box;background:linear-gradient(90deg,#e3f4fc 0%,#d6eefb 45%,#a9dbf6 52%,#9cd0ee 100%)"></div>
<div style="position:absolute;left:484px;top:536px;width:8px;height:1px;background:#2b6a99"></div>
<div style="position:absolute;left:484px;top:537px;width:8px;height:1px;background:#d6f0fd"></div>
<div style="position:absolute;left:484px;top:539px;width:8px;height:1px;background:#2b6a99"></div>
<div style="position:absolute;left:484px;top:540px;width:8px;height:1px;background:#d6f0fd"></div>
<div style="position:absolute;left:484px;top:542px;width:8px;height:1px;background:#2b6a99"></div>
<div style="position:absolute;left:484px;top:543px;width:8px;height:1px;background:#d6f0fd"></div>
<div style="position:absolute;left:39px;top:750px;width:1201px;height:23px;background:#f0f0f0"></div>
<div style="position:absolute;left:39px;top:750px;width:44px;height:23px;border-top:1px solid #a0a0a0;box-sizing:border-box"></div>
<div style="position:absolute;left:126px;top:750px;width:36px;height:24px;border-right:1px solid #9a9a9a;border-top:1px solid #a0a0a0;box-sizing:border-box"></div>
<div style="position:absolute;left:162px;top:750px;width:46px;height:24px;border-right:1px solid #9a9a9a;border-top:1px solid #a0a0a0;box-sizing:border-box"></div>
<div style="position:absolute;left:82px;top:749px;width:44px;height:25px;background:#fff;border:1px solid #9a9a9a;border-top:none;border-radius:0 0 5px 5px;box-sizing:border-box"></div>
<svg style="position:absolute;left:46px;top:754px;overflow:visible;" width="30" height="15.6" viewBox="0 -12 30 15.6"><text x="0" y="0" font-family="'Liberation Sans','Noto Sans CJK SC',sans-serif" font-size="12" fill="#000">源</text><text x="16" y="0" font-family="'Liberation Sans','Noto Sans CJK SC',sans-serif" font-size="12" fill="#000">码</text></svg>
<svg style="position:absolute;left:90px;top:754px;overflow:visible;" width="30" height="15.6" viewBox="0 -12 30 15.6"><text x="0" y="0" font-family="'Liberation Sans','Noto Sans CJK SC',sans-serif" font-size="12" fill="#000">设</text><text x="16" y="0" font-family="'Liberation Sans','Noto Sans CJK SC',sans-serif" font-size="12" fill="#000">计</text></svg>
<div class="t" style="left:137.5px;top:754px;letter-spacing:-1.044px;">JS</div>
<div class="t" style="left:174px;top:754px;letter-spacing:-1.234px;">CSS</div>
<div style="position:absolute;left:505px;top:149px;width:528px;height:1px;background:#a0a0a0"></div>
<div style="position:absolute;left:506px;top:124px;width:78px;height:23px;background:#fff;border-radius:3px"></div>
<div style="position:absolute;left:586px;top:124px;width:48px;height:23px;background:#fff;border-radius:3px"></div>
<svg style="position:absolute;left:509px;top:127px;overflow:visible;" width="50" height="15.6" viewBox="0 -12 50 15.6"><text x="0" y="0" font-family="'Liberation Sans','Noto Sans CJK SC',sans-serif" font-size="12" fill="#000">默认字体</text></svg>
<svg style="position:absolute;left:589px;top:127px;overflow:visible;" width="14" height="15.6" viewBox="0 -12 14 15.6"><text x="0" y="0" font-family="'Liberation Sans','Noto Sans CJK SC',sans-serif" font-size="12" fill="#000">无</text></svg>
<svg style="position:absolute;left:572px;top:133px;overflow:visible;" width="8" height="5" viewBox="0 0 8 5"><path d="M0 .5H8L4 4.5Z" fill="#000"/></svg>
<svg style="position:absolute;left:622px;top:133px;overflow:visible;" width="8" height="5" viewBox="0 0 8 5"><path d="M0 .5H8L4 4.5Z" fill="#000"/></svg>
<div style="position:absolute;left:640px;top:127px;width:12px;height:18px;font:bold 14px 'Liberation Serif',serif;line-height:18px;color:#000;-webkit-text-stroke:.35px #000">B</div>
<div style="position:absolute;left:664px;top:127px;width:12px;height:18px;font:italic bold 14px 'Liberation Serif',serif;line-height:18px;color:#000;-webkit-text-stroke:.45px #000;transform:skewX(-8deg)">I</div>
<div style="position:absolute;left:685px;top:127px;width:12px;height:18px;font:bold 14px 'Liberation Serif',serif;line-height:18px;color:#000;text-decoration:underline;-webkit-text-stroke:.3px #000">U</div>
<div style="position:absolute;left:706px;top:126px;width:1px;height:18px;background:#8e8e8e"></div>
<svg style="position:absolute;left:715px;top:129px;overflow:visible;" width="14" height="12" viewBox="0 0 14 12"><rect x="0" y="0" width="14" height="1" fill="#111"/><rect x="0" y="2" width="10" height="1" fill="#111"/><rect x="0" y="4" width="14" height="1" fill="#111"/><rect x="0" y="6" width="10" height="1" fill="#111"/><rect x="0" y="8" width="14" height="1" fill="#111"/><rect x="0" y="10" width="10" height="1" fill="#111"/></svg>
<svg style="position:absolute;left:738px;top:129px;overflow:visible;" width="14" height="12" viewBox="0 0 14 12"><rect x="0.0" y="0" width="14" height="1" fill="#111"/><rect x="3.0" y="2" width="8" height="1" fill="#111"/><rect x="0.0" y="4" width="14" height="1" fill="#111"/><rect x="3.0" y="6" width="8" height="1" fill="#111"/><rect x="0.0" y="8" width="14" height="1" fill="#111"/><rect x="3.0" y="10" width="8" height="1" fill="#111"/></svg>
<svg style="position:absolute;left:761px;top:129px;overflow:visible;" width="14" height="12" viewBox="0 0 14 12"><rect x="0" y="0" width="14" height="1" fill="#111"/><rect x="4" y="2" width="10" height="1" fill="#111"/><rect x="0" y="4" width="14" height="1" fill="#111"/><rect x="4" y="6" width="10" height="1" fill="#111"/><rect x="0" y="8" width="14" height="1" fill="#111"/><rect x="4" y="10" width="10" height="1" fill="#111"/></svg>
<svg style="position:absolute;left:784px;top:129px;overflow:visible;" width="14" height="12" viewBox="0 0 14 12"><rect x="0" y="0" width="14" height="1" fill="#111"/><rect x="0" y="2" width="14" height="1" fill="#111"/><rect x="0" y="4" width="14" height="1" fill="#111"/><rect x="0" y="6" width="14" height="1" fill="#111"/><rect x="0" y="8" width="14" height="1" fill="#111"/><rect x="0" y="10" width="14" height="1" fill="#111"/></svg>
<div style="position:absolute;left:806px;top:126px;width:1px;height:18px;background:#8e8e8e"></div>
<svg style="position:absolute;left:816px;top:126px;overflow:visible;" width="17" height="18" viewBox="0 0 17 18"><rect x="0" y="13.5" width="16" height="3.5" fill="#fff"/><path d="M2.6 8.2L8.2 2.6L13.6 8L8 13.4Z" fill="#fff" stroke="#1f3a93" stroke-width="1.2" stroke-linejoin="round"/><path d="M6.2 4.6Q4.4 1.2 6.4 .8Q8.2 .6 8.6 4" fill="none" stroke="#1f3a93" stroke-width="1"/><path d="M12.2 6.6Q16.8 7.4 15.6 12.6Q14.2 10 11.4 9.4Z" fill="#3f7ae8" stroke="#1f3a93" stroke-width=".6"/><path d="M4.4 8.2L8.2 4.4" stroke="#9fb6e8" stroke-width=".8"/></svg>
<svg style="position:absolute;left:839px;top:133px;overflow:visible;" width="8" height="5" viewBox="0 0 8 5"><path d="M0 .5H8L4 4.5Z" fill="#000"/></svg>
<div style="position:absolute;left:857px;top:124px;width:16px;height:18px;font:bold 18px 'Liberation Serif',serif;line-height:18px;color:#24408e">A</div>
<div style="position:absolute;left:856px;top:140px;width:16px;height:3px;background:#000"></div>
<svg style="position:absolute;left:879px;top:133px;overflow:visible;" width="8" height="5" viewBox="0 0 8 5"><path d="M0 .5H8L4 4.5Z" fill="#000"/></svg>
<div style="position:absolute;left:894px;top:126px;width:1px;height:18px;background:#8e8e8e"></div>
<svg style="position:absolute;left:510px;top:158px;overflow:visible;" width="13" height="13" viewBox="0 0 13 13"><rect x=".5" y=".5" width="12" height="12" fill="#fff" stroke="#1a1a1a"/><path d="M6.5 0V13M0 6.5H13" stroke="#1a1a1a"/></svg>
<svg style="position:absolute;left:532px;top:162px;overflow:visible;" width="8" height="5" viewBox="0 0 8 5"><path d="M0 .5H8L4 4.5Z" fill="#222"/></svg>
<svg style="position:absolute;left:549px;top:156px;overflow:visible;" width="16" height="18" viewBox="0 0 16 18"><rect x="0" y="14" width="14" height="3" fill="#000"/><path d="M2 13L4 9L11 2L13.5 4.5L6.5 11.5Z" fill="#3f9ae8" stroke="#2a4a8a" stroke-width=".7"/><path d="M5 10L12 3" stroke="#bfe4fb" stroke-width="1"/><path d="M11 2L12.5 .6L15 3L13.5 4.5Z" fill="#f0b24a" stroke="#9a6a1a" stroke-width=".5"/><path d="M2 13L4 9L6.5 11.5Z" fill="#f6e2b8" stroke="#6a5a3a" stroke-width=".4"/></svg>
<svg style="position:absolute;left:572px;top:162px;overflow:visible;" width="8" height="5" viewBox="0 0 8 5"><path d="M0 .5H8L4 4.5Z" fill="#222"/></svg>
<div style="position:absolute;left:590px;top:160px;width:14px;height:1.4px;background:#111"></div>
<div style="position:absolute;left:590px;top:164px;width:14px;height:2px;background:#111"></div>
<div style="position:absolute;left:590px;top:167.5px;width:14px;height:2.6px;background:#111"></div>
<svg style="position:absolute;left:612px;top:162px;overflow:visible;" width="8" height="5" viewBox="0 0 8 5"><path d="M0 .5H8L4 4.5Z" fill="#222"/></svg>
<svg style="position:absolute;left:630px;top:160px;overflow:visible;" width="14" height="11" viewBox="0 0 14 11"><path d="M0 .5H14" stroke="#222" stroke-dasharray="1 1"/><path d="M0 3.5H14" stroke="#222" stroke-dasharray="1 1"/><path d="M0 6.5H14" stroke="#222" stroke-dasharray="3 1"/><path d="M0 9.5H14" stroke="#222" stroke-dasharray="2 1 1 1"/></svg>
<svg style="position:absolute;left:652px;top:162px;overflow:visible;" width="8" height="5" viewBox="0 0 8 5"><path d="M0 .5H8L4 4.5Z" fill="#222"/></svg>
<div style="position:absolute;left:668px;top:157px;width:1px;height:18px;background:#8e8e8e"></div>
<svg style="position:absolute;left:680px;top:159px;overflow:visible;" width="9" height="7" viewBox="0 0 9 7"><path d="M.8 .8L3.6 3.4.8 6M4.8 .8L7.6 3.4 4.8 6" fill="none" stroke="#111" stroke-width="1.3"/></svg>
<svg style="position:absolute;left:699px;top:158px;overflow:visible;" width="16" height="16" viewBox="0 0 16 16"><g stroke="#2f5f5a" stroke-width=".9" fill="none"><path d="M5.4 5L3 2.2 1.6 2.6M10.6 5L13 2.2 14.4 2.6M4.6 8.4L1.4 7.6.6 8.4M11.4 8.4L14.6 7.6 15.4 8.4M5 11L3 13.6 3.4 15.4M11 11L13 13.6 12.6 15.4M6.4 3.4L5.6 1M9.6 3.4L10.4 1"/></g><ellipse cx="8" cy="9" rx="3.2" ry="4.4" fill="#a4c98c" stroke="#3a6a52" stroke-width=".9"/><ellipse cx="8" cy="4.4" rx="2" ry="1.5" fill="#6f9a72" stroke="#3a6a52" stroke-width=".7"/><ellipse cx="7" cy="8.4" rx="1.1" ry="2.2" fill="#d6ecc6" opacity=".9"/></svg>
<div style="position:absolute;left:721px;top:157px;width:1px;height:18px;background:#8e8e8e"></div>
<svg style="position:absolute;left:729px;top:157px;overflow:visible;" width="18" height="17" viewBox="0 0 18 17"><path d="M2 7.5Q3 2.5 9 2.5H12V.5L16.5 4L12 7.5V5.5H9Q5.5 5.5 5 8.5Z" fill="#8fd07a" stroke="#4a9a3a" stroke-width=".8"/><path d="M16 9.5Q15 14.5 9 14.5H6V16.5L1.5 13L6 9.5V11.5H9Q12.5 11.5 13 8.5Z" fill="#8fd07a" stroke="#4a9a3a" stroke-width=".8"/></svg>
<div style="position:absolute;left:505px;top:176px;width:529px;height:574px;background:#fff"></div>
<div style="position:absolute;left:505px;top:750px;width:539px;height:1px;background:#a6a6a6"></div>
<div style="position:absolute;left:511px;top:182px;width:517px;height:562px;border:1px dotted #d89a2a;box-sizing:border-box"></div>
<div style="position:absolute;left:512px;top:183px;width:515px;height:48px;background:#2fa4e7"></div>
<svg style="position:absolute;left:529px;top:199px;overflow:visible;" width="11" height="18" viewBox="0 0 11 18"><path d="M9.5 1.5L2.5 9L9.5 16.5" fill="none" stroke="#fff" stroke-width="2.6"/></svg>
<svg style="position:absolute;left:565px;top:198px;overflow:visible;" width="17" height="17" viewBox="0 0 17 17"><path d="M0 1Q0 0 1 0H13.5L17 3.5V16Q17 17 16 17H1Q0 17 0 16Z" fill="#fff"/><rect x="4" y="0" width="8" height="5.5" fill="#2fa4e7"/><rect x="9" y="1" width="2.2" height="3.6" fill="#fff"/><rect x="4" y="10" width="9" height="7" fill="#2fa4e7"/></svg>
<svg style="position:absolute;left:733px;top:197px;overflow:visible;" width="74" height="23.4" viewBox="0 -18 74 23.4"><text x="0" y="0" font-family="'Liberation Sans','Noto Sans CJK SC',sans-serif" font-size="18" font-weight="bold" fill="#fff">简单数据</text></svg>
<div style="position:absolute;left:955px;top:207px;width:14px;height:2.4px;background:#fff"></div>
<div style="position:absolute;left:960.8px;top:201px;width:2.4px;height:14px;background:#fff"></div>
<div style="position:absolute;left:994px;top:207px;width:15px;height:2.4px;background:#fff"></div>
<div style="position:absolute;left:516px;top:235px;width:507px;height:50px;border:1px dotted #d0d0d0;box-sizing:border-box"></div>
<div style="position:absolute;left:522px;top:241px;width:457px;height:38px;border:1px solid #c8c8c8;border-radius:4px 0 0 4px;box-sizing:border-box;background:#fff;box-shadow:inset 0 1px 1px rgba(0,0,0,.06)"></div>
<div style="position:absolute;left:978px;top:241px;width:39px;height:38px;border-radius:0 4px 4px 0;background:linear-gradient(180deg,#3895ee 0%,#0f72d8 100%);border:1px solid #1670cc;box-sizing:border-box"></div>
<svg style="position:absolute;left:989px;top:252px;overflow:visible;" width="16" height="16" viewBox="0 0 16 16"><circle cx="6" cy="6" r="4.3" fill="none" stroke="#fff" stroke-width="1.7"/><path d="M9.3 9.3L14 14" stroke="#fff" stroke-width="2.4" stroke-linecap="round"/></svg>
<svg style="position:absolute;left:728px;top:289px;overflow:visible;" width="14" height="22" viewBox="0 0 14 22"><rect x="4" y="0" width="6" height="1.2" fill="#999"/><rect x="4" y="2.4" width="6" height="1.4" fill="#666"/><rect x="4" y="5" width="6" height="1.8" fill="#333"/><path d="M4 8H10V13H13.5L7 21 .5 13H4Z" fill="#222"/></svg>
<svg style="position:absolute;left:747px;top:295px;overflow:visible;" width="58" height="18.2" viewBox="0 -14 58 18.2"><text x="0" y="0" font-family="'Liberation Sans','Noto Sans CJK SC',sans-serif" font-size="14" font-weight="bold" fill="#333">下拉刷新</text></svg>
<div class="h b" style="left:803px;top:294px;color:#333">...</div>
<div style="position:absolute;left:521px;top:352px;width:497px;height:108px;border:1px dotted #cfcfcf;box-sizing:border-box"></div>
<div style="position:absolute;left:522px;top:388px;width:495px;height:0px;border-top:1px dotted #cfcfcf"></div>
<div style="position:absolute;left:522px;top:389px;width:495px;height:0px;border-top:1px dotted #d6d6d6"></div>
<div style="position:absolute;left:522px;top:423px;width:495px;height:0px;border-top:1px dotted #cfcfcf"></div>
<div style="position:absolute;left:522px;top:424px;width:495px;height:0px;border-top:1px dotted #d6d6d6"></div>
<div style="position:absolute;left:686px;top:353px;width:0px;height:71px;border-left:1px dotted #cfcfcf"></div>
<div style="position:absolute;left:687px;top:353px;width:0px;height:71px;border-left:1px dotted #d6d6d6"></div>
<div class="h" style="left:527px;top:359px;color:#3f85ba;letter-spacing:-0.018px;">ref('fUserName')</div>
<div class="h" style="left:692px;top:359px;color:#555;letter-spacing:0.134px;">ref("fCreateTime")</div>
<div class="h" style="left:527px;top:394px;color:#c0524c;letter-spacing:0.013px;">ref("fPhoneNumber")</div>
<div class="h" style="left:692px;top:394px;color:#555;letter-spacing:0.150px;">ref('fAddress')</div>
<div class="h" style="left:527px;top:429px;color:#2fa4e7;letter-spacing:0.138px;">ref('fContent')</div>
<div style="position:absolute;left:720px;top:481px;width:150px;height:43px;background:#eee8aa;border:1px dotted #111;box-sizing:border-box"></div>
<div style="position:absolute;left:721px;top:501px;width:148px;height:0px;border-top:1px dotted #111"></div>
<div style="position:absolute;left:721px;top:483px;width:16px;height:17px;background:#fbf9e6"></div>
<svg style="position:absolute;left:721px;top:485px;overflow:visible;" width="16" height="15" viewBox="0 0 16 15"><path d="M1 3.2Q1 1.5 2.6 1.5H5.6L7 3H11.4Q12.6 3 12.6 4.2V10.4Q12.6 11.6 11.4 11.6H2.4Q1 11.6 1 10.2Z" fill="url(#gF)" stroke="#d49a2f" stroke-width=".9"/><circle cx="11.5" cy="11.2" r="2.9" fill="#e1e6d2" stroke="#5aa52c" stroke-width="1.2"/></svg>
<div class="h b" style="left:737px;top:480px;color:#555;font-size:13.5px">model</div>
<div style="position:absolute;left:723px;top:503px;width:71px;height:21px;border:1px solid #e8604c;box-sizing:border-box"></div>
<div style="position:absolute;left:724px;top:505px;width:15px;height:17px;background:#e9e5c4;border:1px solid #cfcfcf;box-sizing:border-box"></div>
<svg style="position:absolute;left:724px;top:505px;overflow:visible;" width="15" height="17" viewBox="0 0 15 17"><path d="M2 2.2Q2 .8 5 .8T8 2.2V10Q8 11.4 5 11.4T2 10Z" fill="url(#gD)" stroke="#b48a1c" stroke-width=".6"/><circle cx="9" cy="12.4" r="3" fill="#3f8fd0" stroke="#2a5fa0" stroke-width=".5"/><path d="M7.4 11.2Q9 10 10.4 11.6Q9.6 13.4 8 13.2Z" fill="#5bb04a"/><path d="M4.2 10.6L2.6 12.4 4.2 14.2M12.6 10.8L14 12.4 12.6 14" fill="none" stroke="#4a6fc4" stroke-width=".8"/></svg>
<div class="h" style="left:739.5px;top:503px;color:#555;font-size:13px;letter-spacing:-0.534px">orderData</div>
<svg style="position:absolute;left:736px;top:650px;overflow:visible;" width="58" height="18.2" viewBox="0 -14 58 18.2"><text x="0" y="0" font-family="'Liberation Sans','Noto Sans CJK SC',sans-serif" font-size="14" fill="#444">加载更多</text></svg>
<div class="h" style="left:792px;top:649px;color:#444">...</div>
<div style="position:absolute;left:512px;top:695px;width:259px;height:48px;background:#0d7ada;border-radius:4px 0 0 4px;box-shadow:inset 0 2px 3px rgba(0,0,0,.18)"></div>
<div style="position:absolute;left:770px;top:695px;width:257px;height:48px;background:linear-gradient(180deg,#3b9bf2 0%,#1479de 100%);border-radius:0 4px 4px 0;box-shadow:inset 0 1px 0 #1c78d6"></div>
<div style="position:absolute;left:770px;top:696px;width:1px;height:46px;background:#1671c8"></div>
<svg style="position:absolute;left:627px;top:710px;overflow:visible;" width="30" height="18.2" viewBox="0 -14 30 18.2"><text x="0" y="0" font-family="'Liberation Sans','Noto Sans CJK SC',sans-serif" font-size="14" fill="#fff">列表</text></svg>
<svg style="position:absolute;left:885px;top:710px;overflow:visible;" width="30" height="18.2" viewBox="0 -14 30 18.2"><text x="0" y="0" font-family="'Liberation Sans','Noto Sans CJK SC',sans-serif" font-size="14" fill="#fff">详细</text></svg>
<svg style="position:absolute;left:1036px;top:130px;overflow:visible;" width="6" height="11" viewBox="0 0 6 11"><path d="M.5 .5V10.5L5.5 5.5Z" fill="#fff" stroke="#555" stroke-width="1"/></svg>
<div style="position:absolute;left:1034px;top:146px;width:12px;height:1px;background:#9a9a9a"></div>
<div style="position:absolute;left:1044px;top:124px;width:1px;height:22px;background:#e4e7f0"></div>
<div style="position:absolute;left:1044px;top:146px;width:1px;height:605px;background:#8e8e96"></div>
<div style="position:absolute;left:1045px;top:124px;width:197px;height:22px;background:#fff;border-radius:3px 0 0 0"></div>
<svg style="position:absolute;left:1230px;top:134px;overflow:visible;" width="8" height="5" viewBox="0 0 8 5"><path d="M0 .5H8L4 4.5Z" fill="#000"/></svg>
<div style="position:absolute;left:1045px;top:146px;width:197px;height:1px;background:#9a9a9a"></div>
<div style="position:absolute;left:1045px;top:147px;width:197px;height:603px;background:#fff"></div>
<div style="position:absolute;left:1044px;top:750px;width:198px;height:1px;background:#9a9a9a"></div>
<div style="position:absolute;left:1044px;top:751px;width:198px;height:1px;background:#c4c4c4"></div>
<div style="position:absolute;left:1224px;top:147px;width:16px;height:603px;background:#f0f0f0"></div>
<svg style="position:absolute;left:1229px;top:155px;overflow:visible;" width="7" height="4" viewBox="0 0 7 4"><path d="M0 4L3.5 0 7 4Z" fill="#444"/></svg>
<svg style="position:absolute;left:1229px;top:738px;overflow:visible;" width="7" height="4" viewBox="0 0 7 4"><path d="M0 0H7L3.5 4Z" fill="#555"/></svg>
<div style="position:absolute;left:1225px;top:165px;width:14px;height:118px;border:1px solid #979797;border-radius:2px;box-sizing:border-box;background:linear-gradient(90deg,#f4f4f4 0%,#e4e4e6 45%,#cfd0d4 55%,#d8d9dc 100%)"></div>
<div style="position:absolute;left:1228px;top:222px;width:8px;height:1px;background:#7a7a7a"></div>
<div style="position:absolute;left:1228px;top:223px;width:8px;height:1px;background:#fff"></div>
<div style="position:absolute;left:1228px;top:225px;width:8px;height:1px;background:#7a7a7a"></div>
<div style="position:absolute;left:1228px;top:226px;width:8px;height:1px;background:#fff"></div>
<div style="position:absolute;left:1228px;top:228px;width:8px;height:1px;background:#7a7a7a"></div>
<div style="position:absolute;left:1228px;top:229px;width:8px;height:1px;background:#fff"></div>
<svg style="position:absolute;left:1055px;top:155px;overflow:visible;" width="6" height="6" viewBox="0 0 6 6"><path d="M5.6 .6V5.6H.6Z" fill="#505050" stroke="#262626" stroke-width=".6" stroke-linejoin="round"/></svg>
<svg style="position:absolute;left:1069px;top:152px;overflow:visible;" width="16" height="13" viewBox="0 0 16 13"><path d="M.7 11V2Q.7 .7 2 .7H4.6Q5.4 .7 6 1.5L6.6 2.4H10.4Q11.6 2.4 11.6 3.6V5" fill="#fdf1cc" stroke="#d39a3a" stroke-width="1"/><path d="M.9 11.4L3.4 5.8Q3.7 5 4.5 5H14.3Q15.4 5 14.9 6L12.6 10.8Q12.3 11.5 11.5 11.5H1.2Z" fill="#fbe0a0" stroke="#d39a3a" stroke-width="1"/></svg>
<div class="t b" style="left:1089px;top:148.5px;font-size:13px;letter-spacing:.15px">bootstrap</div>
<svg style="position:absolute;left:1087px;top:171px;overflow:visible;" width="15" height="13" viewBox="0 0 15 13"><rect x=".5" y=".5" width="14" height="12" fill="#fff" stroke="#7994c8"/><path d="M.5 3.5H14.5M.5 9.5H14.5" stroke="#7994c8"/><rect x="1" y="10" width="13" height="2" fill="#ece9e4"/><rect x="1" y="1" width="13" height="2" fill="#f4f2ee"/></svg>
<div class="t" style="left:1108px;top:170px;letter-spacing:0.184px;">panel</div>
<svg style="position:absolute;left:1090px;top:192px;overflow:visible;" width="10" height="12" viewBox="0 0 10 12"><rect x=".5" y=".5" width="9" height="11" fill="#fff" stroke="#7994c8"/><rect x="1" y="1" width="8" height="2" fill="#a9b1c0"/><rect x="1" y="7" width="8" height="1.6" fill="#a9b1c0"/><rect x="1" y="9.4" width="8" height="1.6" fill="#a9b1c0"/></svg>
<div class="t" style="left:1108px;top:190px;letter-spacing:0.367px;">accordion</div>
<svg style="position:absolute;left:1088px;top:211px;overflow:visible;" width="15" height="14" viewBox="0 0 15 14"><rect x=".5" y=".5" width="14" height="13" fill="#fff" stroke="#7994c8"/><rect x="1" y="1" width="13" height="2" fill="#9fd08a"/><path d="M1 4.5H14M1 6.5H14M1 8.5H14M1 10.5H14M5.5 3V13M9.5 3V13" stroke="#9db3e0" stroke-width=".8"/></svg>
<div class="t" style="left:1108px;top:210px;letter-spacing:0.279px;">table</div>
<svg style="position:absolute;left:1088px;top:231px;overflow:visible;" width="15" height="14" viewBox="0 0 15 14"><path d="M.5 13.5V1.5H5.5V3.5H14.5V13.5Z" fill="#fffdf0" stroke="#7994c8"/><rect x="1" y="2" width="4" height="1.5" fill="#f5e7a0"/></svg>
<div class="t" style="left:1108px;top:230px;letter-spacing:0.094px;">tabs</div>
<svg style="position:absolute;left:1090px;top:249.5px;overflow:visible;" width="11" height="16" viewBox="0 0 11 16"><rect x=".5" y="4.5" width="10" height="11" fill="#fff8dc" stroke="#8a6f3a"/><rect x=".5" y=".5" width="6" height="4" fill="#fff" stroke="#4a5fa0"/><path d="M2 2.5H5" stroke="#4a5fa0"/><path d="M2.5 7.5H8.5M2.5 9.5H8.5M2.5 11.5H8.5M2.5 13.5H8.5" stroke="#4a5fa0"/></svg>
<div class="t" style="left:1108px;top:250px;letter-spacing:0.713px;">dropdown</div>
<svg style="position:absolute;left:1087px;top:274px;overflow:visible;" width="16" height="7" viewBox="0 0 16 7"><path d="M.5 7V2.5Q.5 .5 2.5 .5H8.5V3" fill="none" stroke="#1d7ed0" stroke-width="1.2"/><rect x="10" y="1" width="4.5" height="4" fill="#c4c9d8"/><path d="M9.5 5V.5H15.5V6" fill="none" stroke="#1d7ed0" stroke-width="1"/></svg>
<div class="t" style="left:1108px;top:270px;letter-spacing:-0.251px;">navs</div>
<svg style="position:absolute;left:1087px;top:293px;overflow:visible;" width="15" height="9" viewBox="0 0 15 9"><rect x="0" y="0" width="15" height="9" fill="#0a7fd4"/></svg>
<div class="t" style="left:1108px;top:290px;letter-spacing:0.231px;">navbar</div>
<svg style="position:absolute;left:1088px;top:312px;overflow:visible;" width="15" height="12" viewBox="0 0 15 12"><rect x=".5" y=".5" width="14" height="11" fill="#fff" stroke="#7994c8"/><rect x="3" y="8" width="1.6" height="1.6" fill="#7994c8"/><rect x="6" y="8" width="1.6" height="1.6" fill="#7994c8"/><rect x="9" y="8" width="1.6" height="1.6" fill="#7994c8"/></svg>
<div class="t" style="left:1108px;top:310px;letter-spacing:0.119px;">carousel</div>
<svg style="position:absolute;left:1089px;top:334px;overflow:visible;" width="12" height="8" viewBox="0 0 12 8"><rect x=".4" y=".4" width="11.2" height="6.8" fill="#fff200" stroke="#8f8c7a" stroke-width=".8"/><path d="M8 2.4L10 5M10 2.4L8 5" stroke="#6a5f2a" stroke-width=".7"/></svg>
<div class="t" style="left:1108px;top:330px;letter-spacing:0.297px;">alert</div>
<svg style="position:absolute;left:1087px;top:352px;overflow:visible;" width="16" height="13" viewBox="0 0 16 13"><path d="M0 .5H15M0 7.5H9" stroke="#8e9cc0" stroke-width="1"/><rect x="9.5" y="3.5" width="6" height="9" fill="#4d6fb8" stroke="#8e9cc0"/><rect x="10.5" y="8" width="3.6" height="4" fill="#fff"/><rect x="11.5" y="5" width="1.6" height="2" fill="#dfe6f6"/></svg>
<div class="t" style="left:1108px;top:350px;letter-spacing:0.520px;">row</div>
<svg style="position:absolute;left:1089px;top:373px;overflow:visible;" width="13" height="10" viewBox="0 0 13 10"><rect x=".5" y=".5" width="11" height="8.6" fill="#fff" stroke="#1d7ed0" stroke-width="1"/><path d="M1 2.8H11.5" stroke="#1d7ed0" stroke-width=".8"/><rect x="8.4" y="1.2" width="2" height=".9" fill="#1d7ed0"/></svg>
<div class="t" style="left:1108px;top:370px;letter-spacing:0.440px;">dialog</div>
<svg style="position:absolute;left:1089px;top:394px;overflow:visible;" width="14" height="8" viewBox="0 0 14 8"><path d="M4 .6L.8 4 4 7.4M9.6 .6L12.8 4 9.6 7.4" fill="none" stroke="#2a6a9a" stroke-width="1.4"/></svg>
<div class="t" style="left:1108px;top:390px;letter-spacing:0.366px;">inputGroup</div>
<svg style="position:absolute;left:1089px;top:414px;overflow:visible;" width="14" height="8" viewBox="0 0 14 8"><path d="M4 .6L.8 4 4 7.4M9.6 .6L12.8 4 9.6 7.4" fill="none" stroke="#2a6a9a" stroke-width="1.4"/></svg>
<div class="t" style="left:1108px;top:410px;letter-spacing:0.292px;">controlLabel</div>
<svg style="position:absolute;left:1089px;top:434px;overflow:visible;" width="14" height="8" viewBox="0 0 14 8"><path d="M4 .6L.8 4 4 7.4M9.6 .6L12.8 4 9.6 7.4" fill="none" stroke="#2a6a9a" stroke-width="1.4"/></svg>
<div class="t" style="left:1108px;top:430px;letter-spacing:0.218px;">label</div>
<svg style="position:absolute;left:1089px;top:454px;overflow:visible;" width="14" height="8" viewBox="0 0 14 8"><path d="M4 .6L.8 4 4 7.4M9.6 .6L12.8 4 9.6 7.4" fill="none" stroke="#2a6a9a" stroke-width="1.4"/></svg>
<div class="t" style="left:1108px;top:450px;letter-spacing:0.569px;">badge</div>
<svg style="position:absolute;left:1093px;top:472px;overflow:visible;" width="6" height="13" viewBox="0 0 6 13"><rect x=".6" y=".6" width="4.8" height="11.8" fill="#fff" stroke="#1d7ed0" stroke-width="1.2"/><path d="M2 3.4L3 2.2 4 3.4M2 9.6L3 10.8 4 9.6" fill="none" stroke="#1d7ed0" stroke-width=".8"/><rect x="2" y="5" width="2" height="3" fill="#9cc8ee"/></svg>
<div class="t" style="left:1108px;top:470px;letter-spacing:0.121px;">scrollSpy</div>
<svg style="position:absolute;left:1089px;top:494px;overflow:visible;" width="14" height="8" viewBox="0 0 14 8"><path d="M4 .6L.8 4 4 7.4M9.6 .6L12.8 4 9.6 7.4" fill="none" stroke="#2a6a9a" stroke-width="1.4"/></svg>
<div class="t" style="left:1108px;top:490px;letter-spacing:0.254px;">listGroup</div>
<svg style="position:absolute;left:1089px;top:516px;overflow:visible;" width="14" height="5" viewBox="0 0 14 5"><rect x=".6" y=".6" width="12.8" height="3.8" fill="#fff" stroke="#1d7ed0" stroke-width="1.2"/><path d="M3.8 .6V4.4M7 .6V4.4M10.2 .6V4.4" stroke="#1d7ed0" stroke-width="1"/></svg>
<div class="t" style="left:1108px;top:510px;letter-spacing:0.371px;">pagination</div>
<svg style="position:absolute;left:1089px;top:534px;overflow:visible;" width="14" height="8" viewBox="0 0 14 8"><path d="M4 .6L.8 4 4 7.4M8.6 .6L11.8 4 8.6 7.4" fill="none" stroke="#2a8ad8" stroke-width="1"/></svg>
<div class="t" style="left:1108px;top:530px;letter-spacing:0.527px;">pager</div>
<svg style="position:absolute;left:1087px;top:552px;overflow:visible;" width="16" height="13" viewBox="0 0 16 13"><rect x=".5" y=".5" width="15" height="12" fill="#fff" stroke="#7994c8"/><rect x="1" y="1" width="14" height="2.4" fill="#4d86d8"/><path d="M2 5.5H14M2 7.5H14M2 9.5H14M2 11.5H14" stroke="#b9c6e4" stroke-width=".8" stroke-dasharray="1 1"/><path d="M5.5 4V12M10.5 4V12" stroke="#b9c6e4" stroke-width=".8" stroke-dasharray="1 1"/></svg>
<div class="t" style="left:1108px;top:550px;letter-spacing:0.625px;">form</div>
<svg style="position:absolute;left:1087px;top:573px;overflow:visible;" width="16" height="10" viewBox="0 0 16 10"><path d="M0 .5H16M0 9.5H16" stroke="#7994c8" stroke-width="1"/></svg>
<div class="t" style="left:1108px;top:570px;letter-spacing:0.474px;">formGroup</div>
<svg style="position:absolute;left:1055px;top:595px;overflow:visible;" width="6" height="6" viewBox="0 0 6 6"><path d="M5.6 .6V5.6H.6Z" fill="#505050" stroke="#262626" stroke-width=".6" stroke-linejoin="round"/></svg>
<svg style="position:absolute;left:1069px;top:592px;overflow:visible;" width="16" height="13" viewBox="0 0 16 13"><path d="M.7 11V2Q.7 .7 2 .7H4.6Q5.4 .7 6 1.5L6.6 2.4H10.4Q11.6 2.4 11.6 3.6V5" fill="#fdf1cc" stroke="#d39a3a" stroke-width="1"/><path d="M.9 11.4L3.4 5.8Q3.7 5 4.5 5H14.3Q15.4 5 14.9 6L12.6 10.8Q12.3 11.5 11.5 11.5H1.2Z" fill="#fbe0a0" stroke="#d39a3a" stroke-width="1"/></svg>
<svg style="position:absolute;left:1089px;top:589px;overflow:visible;" width="28" height="16.9" viewBox="0 -13 28 16.9"><text x="0" y="0" font-family="'Liberation Sans','Noto Sans CJK SC',sans-serif" font-size="13" font-weight="bold" fill="#000">数据</text></svg>
<svg style="position:absolute;left:1088px;top:610px;overflow:visible;" width="16" height="15" viewBox="0 0 16 15"><path d="M1 3.2Q1 1.5 2.6 1.5H5.6L7 3H11.4Q12.6 3 12.6 4.2V10.4Q12.6 11.6 11.4 11.6H2.4Q1 11.6 1 10.2Z" fill="url(#gF)" stroke="#d49a2f" stroke-width=".9"/><circle cx="11.5" cy="11.2" r="2.9" fill="#e1e6d2" stroke="#5aa52c" stroke-width="1.2"/></svg>
<div class="t" style="left:1108px;top:610px;letter-spacing:0.431px;">model</div>
<svg style="position:absolute;left:1088px;top:630px;overflow:visible;" width="17" height="17" viewBox="0 0 17 17"><path d="M.8 2.2Q.8 .6 4.6 .6T8.4 2.2V9.4Q8.4 11 4.6 11T.8 9.4Z" fill="url(#gD)" stroke="#b48a1c" stroke-width=".5"/><ellipse cx="4.6" cy="2.2" rx="3.6" ry="1.3" fill="#fff7cc"/><path d="M5 10.8L3.2 12.6 5 14.4M13.6 10.8L15.4 12.6 13.6 14.4" fill="none" stroke="#3a63c8" stroke-width=".9"/><text x="9.4" y="16.2" font-family="Liberation Sans,sans-serif" font-weight="bold" font-size="10.5" text-anchor="middle" fill="#000" stroke="#fff" stroke-width=".0">C</text></svg>
<div class="t" style="left:1108px;top:630px;letter-spacing:0.168px;">data</div>
<svg style="position:absolute;left:1088px;top:650px;overflow:visible;" width="17" height="17" viewBox="0 0 17 17"><path d="M.8 2.2Q.8 .6 4.6 .6T8.4 2.2V9.4Q8.4 11 4.6 11T.8 9.4Z" fill="url(#gD)" stroke="#b48a1c" stroke-width=".5"/><ellipse cx="4.6" cy="2.2" rx="3.6" ry="1.3" fill="#fff7cc"/><path d="M5 10.8L3.2 12.6 5 14.4M13.6 10.8L15.4 12.6 13.6 14.4" fill="none" stroke="#3a63c8" stroke-width=".9"/><text x="9.4" y="16.2" font-family="Liberation Sans,sans-serif" font-weight="bold" font-size="10.5" text-anchor="middle" fill="#000" stroke="#fff" stroke-width=".0">B</text></svg>
<div class="t" style="left:1108px;top:650px;letter-spacing:0.131px;">bizData</div>
<svg style="position:absolute;left:1055px;top:675px;overflow:visible;" width="6" height="6" viewBox="0 0 6 6"><path d="M5.6 .6V5.6H.6Z" fill="#505050" stroke="#262626" stroke-width=".6" stroke-linejoin="round"/></svg>
<svg style="position:absolute;left:1069px;top:672px;overflow:visible;" width="16" height="13" viewBox="0 0 16 13"><path d="M.7 11V2Q.7 .7 2 .7H4.6Q5.4 .7 6 1.5L6.6 2.4H10.4Q11.6 2.4 11.6 3.6V5" fill="#fdf1cc" stroke="#d39a3a" stroke-width="1"/><path d="M.9 11.4L3.4 5.8Q3.7 5 4.5 5H14.3Q15.4 5 14.9 6L12.6 10.8Q12.3 11.5 11.5 11.5H1.2Z" fill="#fbe0a0" stroke="#d39a3a" stroke-width="1"/></svg>
<svg style="position:absolute;left:1089px;top:669px;overflow:visible;" width="28" height="16.9" viewBox="0 -13 28 16.9"><text x="0" y="0" font-family="'Liberation Sans','Noto Sans CJK SC',sans-serif" font-size="13" font-weight="bold" fill="#000">布局</text></svg>
<svg style="position:absolute;left:1087px;top:691px;overflow:visible;" width="15" height="13" viewBox="0 0 15 13"><rect x=".5" y=".5" width="11" height="9" fill="#fff" stroke="#9db1d4"/><rect x="3.5" y="3.5" width="11" height="9" fill="none" stroke="#7994c8"/></svg>
<div class="t" style="left:1108px;top:690px;letter-spacing:0.144px;">contents</div>
<svg style="position:absolute;left:1087px;top:711px;overflow:visible;" width="15" height="13" viewBox="0 0 15 13"><rect x=".5" y=".5" width="14" height="12" fill="#fff" stroke="#7994c8"/><path d="M.5 3.5H14.5M.5 9.5H14.5" stroke="#7994c8"/><rect x="1" y="10" width="13" height="2" fill="#ece9e4"/><rect x="1" y="1" width="13" height="2" fill="#f4f2ee"/></svg>
<div class="t" style="left:1108px;top:710px;letter-spacing:0.184px;">panel</div>
<svg style="position:absolute;left:1087px;top:733px;overflow:visible;" width="16" height="10" viewBox="0 0 16 10"><rect width="16" height="10" fill="#0a7fd4"/><path d="M4.2 2L2 5 4.2 8" fill="none" stroke="#fff" stroke-width="1.3"/><path d="M8 3H13M8 5H13M8 7H13M10.5 2V8" stroke="#bfe0f8" stroke-width=".8"/></svg>
<div class="t" style="left:1108px;top:730px;letter-spacing:0.175px;">titleBar</div>
<svg style="position:absolute;left:1259px;top:114px;overflow:visible;" width="9" height="8" viewBox="0 0 9 8"><rect x="2.5" y=".5" width="5" height="4" fill="#fff" stroke="#5e5a56"/><path d="M2 1h6" stroke="#5e5a56"/><rect x=".5" y="3.5" width="5" height="4" fill="#fff" stroke="#5e5a56"/><path d="M0 4h6" stroke="#5e5a56"/></svg>
<svg style="position:absolute;left:12px;top:114px;overflow:visible;" width="9" height="8" viewBox="0 0 9 8"><rect x="2.5" y=".5" width="5" height="4" fill="#fff" stroke="#5e5a56"/><path d="M2 1h6" stroke="#5e5a56"/><rect x=".5" y="3.5" width="5" height="4" fill="#fff" stroke="#5e5a56"/><path d="M0 4h6" stroke="#5e5a56"/></svg>
<svg style="position:absolute;left:1224px;top:103px;overflow:visible;" width="9" height="8" viewBox="0 0 9 8"><rect x="2.5" y=".5" width="5" height="4" fill="#fff" stroke="#5e5a56"/><path d="M2 1h6" stroke="#5e5a56"/><rect x=".5" y="3.5" width="5" height="4" fill="#fff" stroke="#5e5a56"/><path d="M0 4h6" stroke="#5e5a56"/></svg>
<svg style="position:absolute;left:12px;top:133px;overflow:visible;" width="10" height="14" viewBox="0 0 10 14"><path d="M.5 0V13M.5 4.5H3M.5 10.5H3" stroke="#6a7a9a" stroke-width="1" fill="none"/><rect x="3.5" y="1.5" width="5.5" height="5.5" fill="#fdeedd" stroke="#d2742e" stroke-width=".9"/><path d="M3.5 4.2H9M6.2 1.5V7" stroke="#d2742e" stroke-width=".8"/><rect x="3.5" y="7.9" width="5.5" height="5.5" fill="#fdeedd" stroke="#d2742e" stroke-width=".9"/><path d="M3.5 10.6H9M6.2 7.9V13.4" stroke="#d2742e" stroke-width=".8"/></svg>
<svg style="position:absolute;left:1256px;top:132px;overflow:visible;" width="15" height="15" viewBox="0 0 15 15"><rect x=".5" y=".5" width="11" height="14" fill="#fff" stroke="#4a6ab0"/><path d="M.5 7.5H11.5" stroke="#4a6ab0"/><circle cx="6" cy="4" r="2.4" fill="#e84a4a"/><path d="M3.6 13L6 9.4 8.4 13Z" fill="#f0a030"/><path d="M12 2Q15 4 13 8T14.5 14" fill="none" stroke="#8aa0d0" stroke-width="1.4"/></svg>
<div style="position:absolute;left:1257px;top:153px;font:bold 12px 'Liberation Sans',sans-serif;color:#1f55b8;line-height:16px;-webkit-text-stroke:.3px #1f55b8">@</div>
<svg style="position:absolute;left:1255px;top:174px;overflow:visible;" width="16" height="16" viewBox="0 0 17 17"><path d="M1.5 .5H8.5L11.5 3.5V13.5H1.5Z" fill="#fffbe8" stroke="#b8902a"/><path d="M6.5 4Q4.5 4 5.2 6Q5.6 7.2 4 7.5Q5.6 7.8 5.2 9Q4.5 11 6.5 11" fill="none" stroke="#2a4fa0" stroke-width="1"/><path d="M7 6.5H9.5M7 8.5H9.5" stroke="#2a4fa0"/><path d="M8 11.5H12V9L16 12.5 12 16V13.5H8Z" fill="#f9d66a" stroke="#b8902a" stroke-width=".8"/></svg>
<svg style="position:absolute;left:1254px;top:197px;overflow:visible;" width="18" height="17" viewBox="0 0 18 17"><path d="M9 6L13.5 1.5Q15 .5 16.5 2T17 5L12.5 9.5Z" fill="#f6c15a" stroke="#b8802a" stroke-width=".8"/><path d="M4 10.5L9 6L12.5 9.5L8 14Z" fill="#8a8a90" stroke="#55555a" stroke-width=".7"/><path d="M4 10.5L8 14L3.5 16.5Q1.5 17 1 15.5Z" fill="#fff6c0" stroke="#e0c060" stroke-width=".7"/><path d="M13 3.5L15 5.5" stroke="#fff" stroke-width="1"/></svg>
<svg style="position:absolute;left:1256px;top:220px;overflow:visible;" width="15" height="15" viewBox="0 0 15 15"><rect x=".8" y=".8" width="13.4" height="10" rx="1" fill="#fff" stroke="#1f5fc0" stroke-width="1.6"/><path d="M3.5 4.5H11.5M3.5 7H9" stroke="#1f5fc0" stroke-width="1.2"/><path d="M5 12H10V13.2H12V14.6H3V13.2H5Z" fill="#1f5fc0"/></svg>
<svg style="position:absolute;left:1257px;top:243px;overflow:visible;" width="12" height="15" viewBox="0 0 13 16"><path d="M.6 .6H12.4V14L10.5 12.6 8.5 14.5 6.5 12.8 4.5 14.5 2.5 12.8.6 14Z" fill="#eef0f8" stroke="#6a6f80" stroke-width="1"/><path d="M2.6 3.5H10.4M2.6 5.5H10.4M2.6 7.5H10.4M2.6 9.5H10.4" stroke="#3a3f50" stroke-width=".9"/></svg>
<svg style="position:absolute;left:1255px;top:265px;overflow:visible;" width="16" height="15" viewBox="0 0 17 16"><path d="M0 3H5M0 13H5M6 8H11" stroke="#555" stroke-width="1"/><path d="M3.5 1.5L5.5 3 3.5 4.5M3.5 11.5L5.5 13 3.5 14.5M9.5 6.5L11.5 8 9.5 9.5" fill="none" stroke="#555" stroke-width=".8"/><circle cx="8" cy="3" r="2.4" fill="#6fc05a" stroke="#2e7d22" stroke-width=".8"/><circle cx="14" cy="8" r="2.4" fill="#6fc05a" stroke="#2e7d22" stroke-width=".8"/><circle cx="8" cy="13" r="2.4" fill="#6fc05a" stroke="#2e7d22" stroke-width=".8"/></svg>
<div style="position:absolute;left:2px;top:45px;width:2px;height:2px;background:#aaa498;box-shadow:1px 1px 0 #fbfbfb"></div>
<div style="position:absolute;left:2px;top:48.7px;width:2px;height:2px;background:#aaa498;box-shadow:1px 1px 0 #fbfbfb"></div>
<div style="position:absolute;left:2px;top:52.4px;width:2px;height:2px;background:#aaa498;box-shadow:1px 1px 0 #fbfbfb"></div>
<div style="position:absolute;left:2px;top:56.1px;width:2px;height:2px;background:#aaa498;box-shadow:1px 1px 0 #fbfbfb"></div>
<div style="position:absolute;left:2px;top:59.8px;width:2px;height:2px;background:#aaa498;box-shadow:1px 1px 0 #fbfbfb"></div>
<div style="position:absolute;left:155px;top:45px;width:2px;height:2px;background:#aaa498;box-shadow:1px 1px 0 #fbfbfb"></div>
<div style="position:absolute;left:155px;top:48.7px;width:2px;height:2px;background:#aaa498;box-shadow:1px 1px 0 #fbfbfb"></div>
<div style="position:absolute;left:155px;top:52.4px;width:2px;height:2px;background:#aaa498;box-shadow:1px 1px 0 #fbfbfb"></div>
<div style="position:absolute;left:155px;top:56.1px;width:2px;height:2px;background:#aaa498;box-shadow:1px 1px 0 #fbfbfb"></div>
<div style="position:absolute;left:155px;top:59.8px;width:2px;height:2px;background:#aaa498;box-shadow:1px 1px 0 #fbfbfb"></div>
<div style="position:absolute;left:183px;top:45px;width:2px;height:2px;background:#aaa498;box-shadow:1px 1px 0 #fbfbfb"></div>
<div style="position:absolute;left:183px;top:48.7px;width:2px;height:2px;background:#aaa498;box-shadow:1px 1px 0 #fbfbfb"></div>
<div style="position:absolute;left:183px;top:52.4px;width:2px;height:2px;background:#aaa498;box-shadow:1px 1px 0 #fbfbfb"></div>
<div style="position:absolute;left:183px;top:56.1px;width:2px;height:2px;background:#aaa498;box-shadow:1px 1px 0 #fbfbfb"></div>
<div style="position:absolute;left:183px;top:59.8px;width:2px;height:2px;background:#aaa498;box-shadow:1px 1px 0 #fbfbfb"></div>
<div style="position:absolute;left:252px;top:45px;width:2px;height:2px;background:#aaa498;box-shadow:1px 1px 0 #fbfbfb"></div>
<div style="position:absolute;left:252px;top:48.7px;width:2px;height:2px;background:#aaa498;box-shadow:1px 1px 0 #fbfbfb"></div>
<div style="position:absolute;left:252px;top:52.4px;width:2px;height:2px;background:#aaa498;box-shadow:1px 1px 0 #fbfbfb"></div>
<div style="position:absolute;left:252px;top:56.1px;width:2px;height:2px;background:#aaa498;box-shadow:1px 1px 0 #fbfbfb"></div>
<div style="position:absolute;left:252px;top:59.8px;width:2px;height:2px;background:#aaa498;box-shadow:1px 1px 0 #fbfbfb"></div>
<div style="position:absolute;left:325px;top:45px;width:2px;height:2px;background:#aaa498;box-shadow:1px 1px 0 #fbfbfb"></div>
<div style="position:absolute;left:325px;top:48.7px;width:2px;height:2px;background:#aaa498;box-shadow:1px 1px 0 #fbfbfb"></div>
<div style="position:absolute;left:325px;top:52.4px;width:2px;height:2px;background:#aaa498;box-shadow:1px 1px 0 #fbfbfb"></div>
<div style="position:absolute;left:325px;top:56.1px;width:2px;height:2px;background:#aaa498;box-shadow:1px 1px 0 #fbfbfb"></div>
<div style="position:absolute;left:325px;top:59.8px;width:2px;height:2px;background:#aaa498;box-shadow:1px 1px 0 #fbfbfb"></div>
<div style="position:absolute;left:353px;top:45px;width:2px;height:2px;background:#aaa498;box-shadow:1px 1px 0 #fbfbfb"></div>
<div style="position:absolute;left:353px;top:48.7px;width:2px;height:2px;background:#aaa498;box-shadow:1px 1px 0 #fbfbfb"></div>
<div style="position:absolute;left:353px;top:52.4px;width:2px;height:2px;background:#aaa498;box-shadow:1px 1px 0 #fbfbfb"></div>
<div style="position:absolute;left:353px;top:56.1px;width:2px;height:2px;background:#aaa498;box-shadow:1px 1px 0 #fbfbfb"></div>
<div style="position:absolute;left:353px;top:59.8px;width:2px;height:2px;background:#aaa498;box-shadow:1px 1px 0 #fbfbfb"></div>
<div style="position:absolute;left:478px;top:45px;width:2px;height:2px;background:#aaa498;box-shadow:1px 1px 0 #fbfbfb"></div>
<div style="position:absolute;left:478px;top:48.7px;width:2px;height:2px;background:#aaa498;box-shadow:1px 1px 0 #fbfbfb"></div>
<div style="position:absolute;left:478px;top:52.4px;width:2px;height:2px;background:#aaa498;box-shadow:1px 1px 0 #fbfbfb"></div>
<div style="position:absolute;left:478px;top:56.1px;width:2px;height:2px;background:#aaa498;box-shadow:1px 1px 0 #fbfbfb"></div>
<div style="position:absolute;left:478px;top:59.8px;width:2px;height:2px;background:#aaa498;box-shadow:1px 1px 0 #fbfbfb"></div>
<div style="position:absolute;left:569px;top:45px;width:2px;height:2px;background:#aaa498;box-shadow:1px 1px 0 #fbfbfb"></div>
<div style="position:absolute;left:569px;top:48.7px;width:2px;height:2px;background:#aaa498;box-shadow:1px 1px 0 #fbfbfb"></div>
<div style="position:absolute;left:569px;top:52.4px;width:2px;height:2px;background:#aaa498;box-shadow:1px 1px 0 #fbfbfb"></div>
<div style="position:absolute;left:569px;top:56.1px;width:2px;height:2px;background:#aaa498;box-shadow:1px 1px 0 #fbfbfb"></div>
<div style="position:absolute;left:569px;top:59.8px;width:2px;height:2px;background:#aaa498;box-shadow:1px 1px 0 #fbfbfb"></div>
<svg style="position:absolute;left:9px;top:45px;overflow:visible;" width="16" height="16" viewBox="0 0 16 16"><rect x="1.5" y="3.5" width="11" height="11" fill="#fff" stroke="#a8903a"/><rect x="2" y="4" width="10" height="2.4" fill="#5f8fd8"/><path d="M12.5 8.5Q12.5 13.5 7 14.5" fill="none" stroke="#e8c85a" stroke-width="1"/><path d="M12 .5V6M9.3 3.2H14.7" stroke="#e0a818" stroke-width="1.6"/><path d="M12 1.5V5M10.3 3.2H13.7" stroke="#fff6b0" stroke-width=".6"/></svg>
<svg style="position:absolute;left:32px;top:51px;overflow:visible;" width="8" height="5" viewBox="0 0 8 5"><path d="M0 .5H8L4 4.5Z" fill="#1a1a1a"/></svg>
<svg style="position:absolute;left:49px;top:45px;overflow:visible;" width="17" height="16" viewBox="0 0 17 16"><path d="M1 7.5L4.5 5H12.5L16 7.5L14.5 13Q14 14.5 12.5 14.5H4.5Q3 14.5 2.5 13Z" fill="#e6a44a" stroke="#a8641e" stroke-width=".8"/><path d="M1 7.5H16L14.8 10H2.2Z" fill="#f6cf8a" stroke="#a8641e" stroke-width=".6"/><path d="M6.5 7Q7.5 2.5 12.5 1.5L11.5 .3 15.5 1.2 13.8 4.8 13.2 3.2Q9.5 4 9 7.5Z" fill="#4caf2a" stroke="#2a7a12" stroke-width=".6"/></svg>
<svg style="position:absolute;left:72px;top:51px;overflow:visible;" width="8" height="5" viewBox="0 0 8 5"><path d="M0 .5H8L4 4.5Z" fill="#1a1a1a"/></svg>
<svg style="position:absolute;left:89px;top:46px;overflow:visible;" width="15" height="15" viewBox="0 0 15 15"><path d="M.5 1.5Q.5 .5 1.5 .5H13.5Q14.5 .5 14.5 1.5V14.5H.5Z" fill="#c4d6ee" stroke="#5a7ab0"/><rect x="3" y="1" width="9" height="6" fill="#fff"/><rect x="3" y="1" width="9" height="1.4" fill="#f0d89a"/><rect x="3.5" y="9.5" width="8" height="5" fill="#eef3fa" stroke="#5a7ab0" stroke-width=".8"/><rect x="5" y="10.5" width="2.4" height="3.4" fill="#f0d070"/></svg>
<svg style="position:absolute;left:112px;top:46px;overflow:visible;" width="15" height="15" viewBox="0 0 17 17"><rect x=".5" y=".5" width="9" height="9" rx="1" fill="#dbe6f4" stroke="#7a94bc"/><rect x="2.5" y="2.5" width="9" height="9" rx="1" fill="#dbe6f4" stroke="#7a94bc"/><path d="M4.5 5.5Q4.5 4.5 5.5 4.5H15.5Q16.5 4.5 16.5 5.5V16.5H4.5Z" fill="#c4d6ee" stroke="#5a7ab0"/><rect x="7" y="5" width="7" height="4.5" fill="#fff"/><rect x="7" y="5" width="7" height="1.2" fill="#f0d89a"/><rect x="7.5" y="11.5" width="6" height="5" fill="#eef3fa" stroke="#5a7ab0" stroke-width=".8"/><rect x="8.6" y="12.5" width="2" height="3.4" fill="#f0d070"/></svg>
<svg style="position:absolute;left:135px;top:46px;overflow:visible;" width="16" height="15" viewBox="0 0 16 15"><path d="M3.5 6V.5H10L12.5 3V6" fill="#fafafa" stroke="#c4c8d0"/><path d="M5.5 3H9.5M5.5 5H10.5" stroke="#d0d4dc" stroke-width=".8"/><rect x=".5" y="6.5" width="15" height="6" rx="1.2" fill="#e2e4ea" stroke="#c0c4cc"/><rect x="2.5" y="11.5" width="11" height="3" fill="#f4f4f6" stroke="#c8ccd4"/></svg>
<svg style="position:absolute;left:163px;top:46px;overflow:visible;" width="15" height="15" viewBox="0 0 15 15"><circle cx="7.5" cy="7.5" r="4.2" fill="#8fb6ec" stroke="#5a86c8" stroke-width=".8"/><path d="M1 1.5L14 13.5" stroke="#1f3f9a" stroke-width="1.5"/></svg>
<svg style="position:absolute;left:190px;top:45px;overflow:visible;" width="16" height="16" viewBox="0 0 16 16"><rect x="1.5" y="3.5" width="10" height="10" fill="#f6dcc4" stroke="#a8542a"/><path d="M1.5 8.5H11.5M6.5 3.5V13.5" stroke="#a8542a"/><path d="M12 .3L13 2.8 15.6 3 13.6 4.7 14.3 7.3 12 5.9 9.7 7.3 10.4 4.7 8.4 3 11 2.8Z" fill="#ffe680" stroke="#d8a020" stroke-width=".6"/></svg>
<svg style="position:absolute;left:213px;top:45px;overflow:visible;" width="17" height="17" viewBox="0 0 17 17"><circle cx="7.5" cy="9" r="6.4" fill="#2f9a44" stroke="#1a6a2a" stroke-width=".8"/><path d="M10.4 6.8Q9.2 5.4 7.4 5.4Q4.4 5.4 4.4 9T7.4 12.6Q9.2 12.6 10.4 11.2" fill="none" stroke="#fff" stroke-width="1.9"/><path d="M13 .3L14 2.8 16.6 3 14.6 4.7 15.3 7.3 13 5.9 10.7 7.3 11.4 4.7 9.4 3 12 2.8Z" fill="#ffe680" stroke="#d8a020" stroke-width=".6"/></svg>
<svg style="position:absolute;left:237px;top:51px;overflow:visible;" width="8" height="5" viewBox="0 0 8 5"><path d="M0 .5H8L4 4.5Z" fill="#1a1a1a"/></svg>
<svg style="position:absolute;left:258px;top:45px;overflow:visible;" width="16" height="16" viewBox="0 0 16 16"><path d="M3.8 9.6Q.8 7.2 2.2 4.4Q3.2 2.8 4.8 3.8" fill="none" stroke="#111" stroke-width="1"/><path d="M10.2 6.2L13 8.6L9.2 11.8L14 15.5H11.6L7.2 12.6L3.8 15.5H1.6L4.4 11.4L3.4 9.2Z" fill="#e3a63a" stroke="#111" stroke-width=".8" stroke-linejoin="round"/><path d="M5.4 9.4L7.8 11.8M7.2 7.8L9.8 10.4" stroke="#7a4a10" stroke-width=".7"/><path d="M9 .8L10.6 2.8H13.4L15 .8L15.4 5.4Q15 7.4 12.4 7.9L10.2 7.4Q8.7 6 9 .8Z" fill="#ecd0a0" stroke="#111" stroke-width=".8" stroke-linejoin="round"/><path d="M10.6 4.3h1M13 4.3h1" stroke="#111" stroke-width=".8"/><path d="M11.7 5.6h1.2l-.6.7z" fill="#111"/></svg>
<svg style="position:absolute;left:282px;top:45px;overflow:visible;" width="16" height="16" viewBox="0 0 16 16"><path d="M3.8 9.6Q.8 7.2 2.2 4.4Q3.2 2.8 4.8 3.8" fill="none" stroke="#111" stroke-width="1"/><path d="M10.2 6.2L13 8.6L9.2 11.8L14 15.5H11.6L7.2 12.6L3.8 15.5H1.6L4.4 11.4L3.4 9.2Z" fill="#e3a63a" stroke="#111" stroke-width=".8" stroke-linejoin="round"/><path d="M5.4 9.4L7.8 11.8M7.2 7.8L9.8 10.4" stroke="#7a4a10" stroke-width=".7"/><path d="M9 .8L10.6 2.8H13.4L15 .8L15.4 5.4Q15 7.4 12.4 7.9L10.2 7.4Q8.7 6 9 .8Z" fill="#ecd0a0" stroke="#111" stroke-width=".8" stroke-linejoin="round"/><path d="M10.6 4.3h1M13 4.3h1" stroke="#111" stroke-width=".8"/><path d="M11.7 5.6h1.2l-.6.7z" fill="#111"/><circle cx="10" cy="10.8" r="4.8" fill="#ee1c1c"/><path d="M7.9 8.7L12.1 12.9M12.1 8.7L7.9 12.9" stroke="#fff" stroke-width="1.7"/></svg>
<svg style="position:absolute;left:306px;top:45px;overflow:visible;" width="16" height="16" viewBox="0 0 16 16"><path d="M3.8 9.6Q.8 7.2 2.2 4.4Q3.2 2.8 4.8 3.8" fill="none" stroke="#111" stroke-width="1"/><path d="M10.2 6.2L13 8.6L9.2 11.8L14 15.5H11.6L7.2 12.6L3.8 15.5H1.6L4.4 11.4L3.4 9.2Z" fill="#e3a63a" stroke="#111" stroke-width=".8" stroke-linejoin="round"/><path d="M5.4 9.4L7.8 11.8M7.2 7.8L9.8 10.4" stroke="#7a4a10" stroke-width=".7"/><path d="M9 .8L10.6 2.8H13.4L15 .8L15.4 5.4Q15 7.4 12.4 7.9L10.2 7.4Q8.7 6 9 .8Z" fill="#ecd0a0" stroke="#111" stroke-width=".8" stroke-linejoin="round"/><path d="M10.6 4.3h1M13 4.3h1" stroke="#111" stroke-width=".8"/><path d="M11.7 5.6h1.2l-.6.7z" fill="#111"/><path d="M4.4 12.2Q5 7.6 10 7.6Q14.8 7.6 14.8 12.2Q14.8 14.8 12.4 14.8L12.4 12.8Q13 12.8 13 12Q13 9.6 10 9.6Q7.2 9.6 6.6 12.2L8.2 12.2 5 15.4 2.2 12.2Z" fill="#4aa8f0" stroke="#1a4aa8" stroke-width=".7" stroke-linejoin="round"/></svg>
<svg style="position:absolute;left:332px;top:45px;overflow:visible;" width="16" height="16" viewBox="0 0 16 16"><circle cx="8" cy="8" r="7" fill="#f4f8ff" stroke="#9ab4e0" stroke-width="1.4"/><circle cx="8" cy="8" r="5.6" fill="none" stroke="#c9dcf6" stroke-width="1"/><path d="M6.2 4.4L11.2 8 6.2 11.6Z" fill="#3a78d8"/></svg>
<svg style="position:absolute;left:361px;top:45px;overflow:visible;" width="16" height="16" viewBox="0 0 16 16"><g stroke="#2f5f5a" stroke-width=".9" fill="none"><path d="M5.4 5L3 2.2 1.6 2.6M10.6 5L13 2.2 14.4 2.6M4.6 8.4L1.4 7.6.6 8.4M11.4 8.4L14.6 7.6 15.4 8.4M5 11L3 13.6 3.4 15.4M11 11L13 13.6 12.6 15.4M6.4 3.4L5.6 1M9.6 3.4L10.4 1"/></g><ellipse cx="8" cy="9" rx="3.2" ry="4.4" fill="#a4c98c" stroke="#3a6a52" stroke-width=".9"/><ellipse cx="8" cy="4.4" rx="2" ry="1.5" fill="#6f9a72" stroke="#3a6a52" stroke-width=".7"/><ellipse cx="7" cy="8.4" rx="1.1" ry="2.2" fill="#d6ecc6" opacity=".9"/></svg>
<svg style="position:absolute;left:385px;top:51px;overflow:visible;" width="8" height="5" viewBox="0 0 8 5"><path d="M0 .5H8L4 4.5Z" fill="#1a1a1a"/></svg>
<svg style="position:absolute;left:401px;top:45px;overflow:visible;" width="16" height="16" viewBox="0 0 16 16"><circle cx="8" cy="8" r="7.3" fill="url(#gR)" stroke="#1f6a1f" stroke-width=".7"/><path d="M5.8 3.8L12 8 5.8 12.2Z" fill="#fff"/></svg>
<svg style="position:absolute;left:424px;top:51px;overflow:visible;" width="8" height="5" viewBox="0 0 8 5"><path d="M0 .5H8L4 4.5Z" fill="#1a1a1a"/></svg>
<svg style="position:absolute;left:440px;top:44px;overflow:visible;" width="18" height="18" viewBox="0 0 18 18"><circle cx="6.5" cy="6.5" r="5.8" fill="url(#gR)" stroke="#1f6a1f" stroke-width=".7"/><path d="M4.8 3.4L9.6 6.5 4.8 9.6Z" fill="#fff"/><rect x="8.5" y="11.5" width="9" height="5.5" rx=".8" fill="#d8342a" stroke="#8a1a14" stroke-width=".8"/><path d="M11 11.5V10Q11 9.3 11.7 9.3H14.3Q15 9.3 15 10V11.5" fill="none" stroke="#8a1a14" stroke-width="1"/><rect x="12" y="13" width="2" height="1.6" fill="#f4e8c0"/></svg>
<svg style="position:absolute;left:464px;top:51px;overflow:visible;" width="8" height="5" viewBox="0 0 8 5"><path d="M0 .5H8L4 4.5Z" fill="#1a1a1a"/></svg>
<svg style="position:absolute;left:484px;top:45px;overflow:visible;" width="17" height="16" viewBox="0 0 17 16"><path d="M1 14.5V5.2Q1 4 2.2 4H5.4L6.8 5.6H11.8Q12.8 5.6 12.8 6.8V8" fill="#fbe9b2" stroke="#b87a1e" stroke-width="1"/><path d="M1 14.5L3.8 8.6Q4.1 8 4.8 8H15.4Q16.3 8 15.9 8.9L13.6 13.9Q13.3 14.5 12.6 14.5Z" fill="#f7d080" stroke="#b87a1e" stroke-width="1"/><circle cx="8" cy="3.6" r="3" fill="#7a5fc0" stroke="#4a3a8a" stroke-width=".6"/><circle cx="12.6" cy="6.4" r="2.8" fill="#4caf5a" stroke="#2a7a3a" stroke-width=".6"/></svg>
<svg style="position:absolute;left:507px;top:45px;overflow:visible;" width="17" height="16" viewBox="0 0 17 16"><path d="M1 14.5V5.2Q1 4 2.2 4H5.4L6.8 5.6H11.8Q12.8 5.6 12.8 6.8V8" fill="#fbe9b2" stroke="#b87a1e" stroke-width="1"/><path d="M1 14.5L3.8 8.6Q4.1 8 4.8 8H15.4Q16.3 8 15.9 8.9L13.6 13.9Q13.3 14.5 12.6 14.5Z" fill="#f7d080" stroke="#b87a1e" stroke-width="1"/><rect x="7.5" y="2.5" width="6" height="5" fill="#eef3fa" stroke="#5a7ab0"/><rect x="8" y="3" width="5" height="1.2" fill="#7a9ad0"/></svg>
<svg style="position:absolute;left:531px;top:44px;overflow:visible;" width="18" height="17" viewBox="0 0 18 17"><path d="M9 6L13.5 1.5Q15 .5 16.5 2T17 5L12.5 9.5Z" fill="#f6c15a" stroke="#b8802a" stroke-width=".8"/><path d="M4 10.5L9 6L12.5 9.5L8 14Z" fill="#8a8a90" stroke="#55555a" stroke-width=".7"/><path d="M4 10.5L8 14L3.5 16.5Q1.5 17 1 15.5Z" fill="#fff6c0" stroke="#e0c060" stroke-width=".7"/><path d="M13 3.5L15 5.5" stroke="#fff" stroke-width="1"/></svg>
<svg style="position:absolute;left:555px;top:51px;overflow:visible;" width="8" height="5" viewBox="0 0 8 5"><path d="M0 .5H8L4 4.5Z" fill="#1a1a1a"/></svg>
<svg style="position:absolute;left:577px;top:45px;overflow:visible;" width="15" height="16" viewBox="0 0 15 16"><rect x="5.5" y="3.5" width="9" height="12" fill="#f4f4f4" stroke="#c4c4c4"/><path d="M8 6.5H12.5M8 8.5H12.5M8 10.5H12.5M8 12.5H12.5" stroke="#cfcfcf" stroke-width=".8"/><path d="M3 .8H7V7H9.5L5 12.2.5 7H3Z" fill="#e6e6e6" stroke="#b4b4b4" stroke-width=".9"/></svg>
<svg style="position:absolute;left:600px;top:51px;overflow:visible;" width="8" height="5" viewBox="0 0 8 5"><path d="M0 .5H8L4 4.5Z" fill="#8a8a8a"/></svg>
<svg style="position:absolute;left:617px;top:45px;overflow:visible;" width="15" height="16" viewBox="0 0 15 16"><rect x="5.5" y=".5" width="9" height="12" fill="#f4f4f4" stroke="#c4c4c4"/><path d="M8 3.5H12.5M8 5.5H12.5M8 7.5H12.5M8 9.5H12.5" stroke="#cfcfcf" stroke-width=".8"/><path d="M3 15.2H7V9H9.5L5 3.8.5 9H3Z" fill="#e6e6e6" stroke="#b4b4b4" stroke-width=".9"/></svg>
<svg style="position:absolute;left:640px;top:51px;overflow:visible;" width="8" height="5" viewBox="0 0 8 5"><path d="M0 .5H8L4 4.5Z" fill="#8a8a8a"/></svg>
<svg style="position:absolute;left:656px;top:46px;overflow:visible;" width="17" height="14" viewBox="0 0 17 14"><path d="M4 7.5L9.5 2.5V5.5H16V10H9.5V12.8Z" fill="#fde9a6" stroke="#c98f1d" stroke-width="1.1" stroke-linejoin="round"/><path d="M2.5 .5V5.5M.3 1.8L4.7 4.2M.3 4.2L4.7 1.8" stroke="#2a5fc0" stroke-width=".9"/></svg>
<svg style="position:absolute;left:680px;top:46px;overflow:visible;" width="16" height="14" viewBox="0 0 16 14"><path d="M1 7L7.5 1.2V4.5H15V9.5H7.5V12.8Z" fill="#fde9a6" stroke="#c98f1d" stroke-width="1.1" stroke-linejoin="round"/></svg>
<svg style="position:absolute;left:703px;top:51px;overflow:visible;" width="8" height="5" viewBox="0 0 8 5"><path d="M0 .5H8L4 4.5Z" fill="#1a1a1a"/></svg>
<svg style="position:absolute;left:720px;top:46px;overflow:visible;" width="16" height="14" viewBox="0 0 16 14"><path d="M15 7L8.5 1.2V4.5H1V9.5H8.5V12.8Z" fill="#f4f4f4" stroke="#c0c0c0" stroke-width="1.1" stroke-linejoin="round"/></svg>
<svg style="position:absolute;left:743px;top:51px;overflow:visible;" width="8" height="5" viewBox="0 0 8 5"><path d="M0 .5H8L4 4.5Z" fill="#8a8a8a"/></svg>
<div style="position:absolute;left:758px;top:44px;width:1px;height:18px;background:#8e8e8e"></div>
<svg style="position:absolute;left:767px;top:45px;overflow:visible;" width="16" height="16" viewBox="0 0 16 16"><rect x=".5" y="4.5" width="11" height="10" fill="#fbfbfb" stroke="#b4b4b4"/><rect x="1" y="5" width="10" height="2" fill="#d4d8e0"/><path d="M8 8L11.5 4.5M10 2.5L13.8 6.3M11 3.5L13 1.2 15 3.2 12.8 5.2" fill="#cfd4dc" stroke="#a4a8b0" stroke-width="1"/></svg>
<svg style="position:absolute;left:945px;top:74px;overflow:visible;" width="16" height="15" viewBox="0 0 16 15"><rect x="1.5" y="3.5" width="11" height="10" fill="#fff" stroke="#5a7ab0"/><rect x="2" y="4" width="10" height="2" fill="#7a9ad8"/><path d="M6.5 6V13.5M6.5 9.5H12.5" stroke="#5a7ab0"/><path d="M12.5 .3L13.4 2.4 15.6 2.6 13.9 4 14.5 6.2 12.5 5 10.5 6.2 11.1 4 9.4 2.6 11.6 2.4Z" fill="#ffe680" stroke="#d8a020" stroke-width=".6"/></svg>
<svg style="position:absolute;left:976px;top:73px;overflow:visible;" width="17" height="17" viewBox="0 0 17 17"><rect x="2.5" y=".8" width="11" height="9" rx="1" fill="#fff" stroke="#2a5fc0" stroke-width="1.5"/><rect x="4.2" y="2.5" width="7.6" height="5.6" fill="#3f8ff0"/><path d="M8 10V13" stroke="#6a6a6a" stroke-width="1.6"/><rect x="4.5" y="12.5" width="7" height="3" fill="#f6c64a" stroke="#b8862a" stroke-width=".8"/><path d="M.5 14.5H4.5M11.5 14.5H15.5" stroke="#b8862a"/></svg>
<svg style="position:absolute;left:1044px;top:73px;overflow:visible;" width="17" height="17" viewBox="0 0 17 17"><path d="M3 2.4Q3 .8 7 .8T11 2.4V8H3Z" fill="#f6cf5a" stroke="#b8862a" stroke-width=".8"/><ellipse cx="7" cy="2.4" rx="3.8" ry="1.4" fill="#fff0b0"/><rect x="1.5" y="7.5" width="14" height="8" fill="#fff" stroke="#2a4a8a"/><text x="8.5" y="14.2" font-family="Liberation Sans,sans-serif" font-weight="bold" font-size="6.5" text-anchor="middle" fill="#1a2a6a">SVN</text></svg>
<svg style="position:absolute;left:1165px;top:73px;overflow:visible;" width="18" height="18" viewBox="0 0 18 18"><rect x="1.5" y="1.5" width="7" height="6" fill="#fff4e0" stroke="#b8642a" stroke-width=".9"/><path d="M1.5 4.5H8.5M5 1.5V7.5" stroke="#b8642a" stroke-width=".9"/><circle cx="5" cy="11" r="3.6" fill="#4caf5a" stroke="#2a7a3a" stroke-width=".7"/><circle cx="10" cy="13.6" r="3.2" fill="#8a6fd0" stroke="#5a3fa0" stroke-width=".7"/><path d="M14.5 1.5V6.5Q14.5 8.5 12.5 8.5T10.8 7" fill="none" stroke="#2a5fb8" stroke-width="1.5"/></svg>
<svg style="position:absolute;left:1220px;top:74px;overflow:visible;" width="16" height="16" viewBox="0 0 16 16"><g stroke="#2f5f5a" stroke-width=".9" fill="none"><path d="M5.4 5L3 2.2 1.6 2.6M10.6 5L13 2.2 14.4 2.6M4.6 8.4L1.4 7.6.6 8.4M11.4 8.4L14.6 7.6 15.4 8.4M5 11L3 13.6 3.4 15.4M11 11L13 13.6 12.6 15.4M6.4 3.4L5.6 1M9.6 3.4L10.4 1"/></g><ellipse cx="8" cy="9" rx="3.2" ry="4.4" fill="#a4c98c" stroke="#3a6a52" stroke-width=".9"/><ellipse cx="8" cy="4.4" rx="2" ry="1.5" fill="#6f9a72" stroke="#3a6a52" stroke-width=".7"/><ellipse cx="7" cy="8.4" rx="1.1" ry="2.2" fill="#d6ecc6" opacity=".9"/></svg>
</body></html>
